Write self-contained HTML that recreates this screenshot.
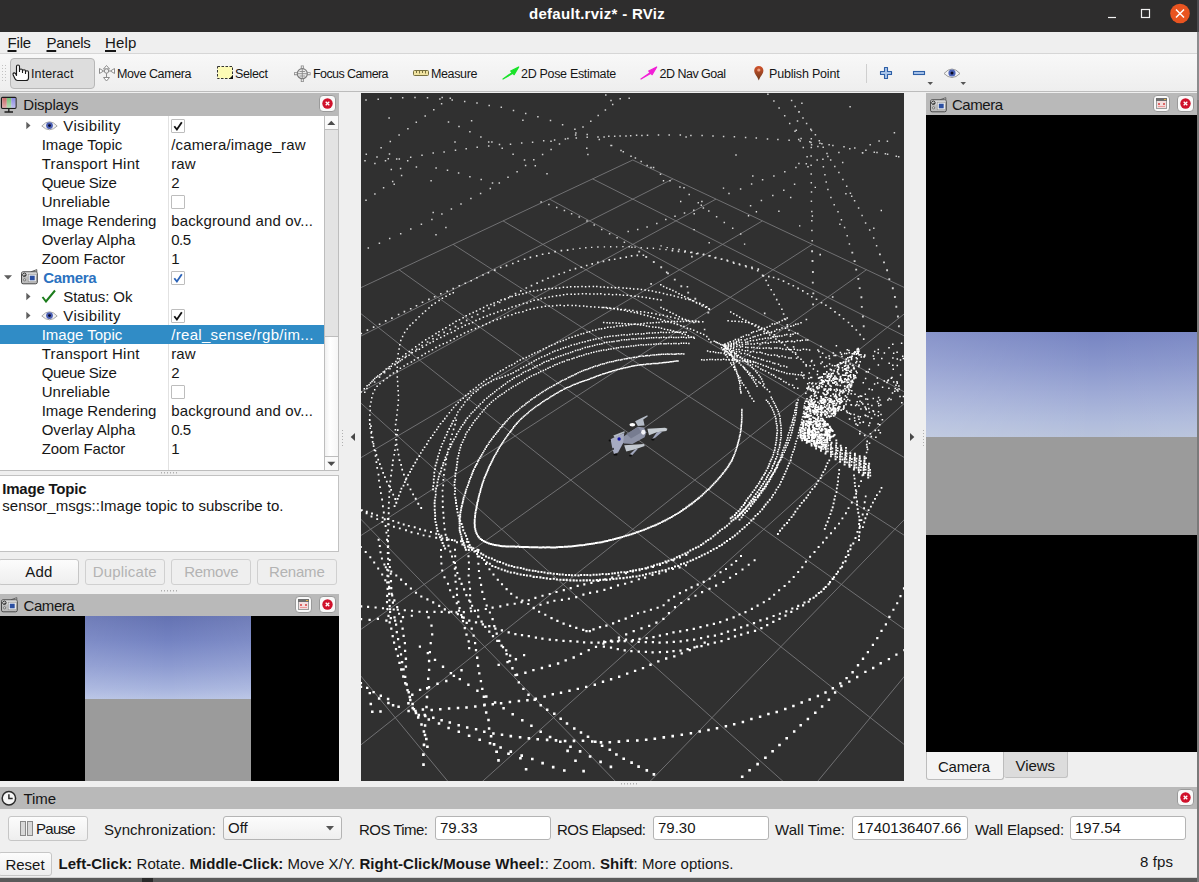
<!DOCTYPE html>
<html><head><meta charset="utf-8"><title>default.rviz* - RViz</title>
<style>
*{box-sizing:border-box;margin:0;padding:0}
html,body{width:1199px;height:882px;overflow:hidden;background:#efefef}
body{font-family:"Liberation Sans",sans-serif;font-size:15px;color:#161616;position:relative}
.a{position:absolute}
.t{position:absolute;white-space:nowrap;line-height:19px;height:19px}
#titlebar{left:0;top:0;width:1197px;height:32px;background:#2e2d2d}
#menubar{left:0;top:32px;width:1197px;height:22px;background:#efefef;border-bottom:1px solid #d6d6d6}
#toolbar{left:0;top:54px;width:1197px;height:38px;background:linear-gradient(#f8f8f8,#eeeeee);border-bottom:1px solid #bcbcbc}
.tb{position:absolute;top:65px;height:18px;line-height:18px;white-space:nowrap;color:#161616}
.dt{position:absolute;background:#b9b9b9;height:23px}
.dbtn{position:absolute;width:17px;height:17px;border:1px solid #9a9a9a;border-radius:4px;background:#f9f9f9}
.cb{position:absolute;left:171px;width:14px;height:14px;border:1px solid #bdbdbd;border-radius:1px;background:#fff}
.btn{position:absolute;height:27px;border:1px solid #c6c6c6;border-radius:3px;background:linear-gradient(#fcfcfc,#eeeeee);text-align:center;line-height:25px;font-size:15px}
.btn.dis{color:#b3b3b3;border-color:#d0d0d0;background:#efefef}
.field{position:absolute;height:24px;border:1px solid #b4b4b4;border-radius:3px;background:#fff;line-height:22px;padding-left:4px;font-size:15px;white-space:nowrap}
</style></head><body>
<div id="titlebar" class="a"></div>
<div class="t" style="left:529px;top:4px;font-weight:700;letter-spacing:0.284px;color:#fff;">default.rviz* - RViz</div>
<svg class="a" style="left:1100px;top:0" width="97" height="32" viewBox="0 0 97 32">
<path d="M8 17.5h8" stroke="#f2f2f2" stroke-width="1.2" fill="none"/>
<rect x="41.5" y="9.500" width="8" height="8" stroke="#f2f2f2" stroke-width="1.2" fill="none"/>
<circle cx="80" cy="13.500" r="9.800" fill="#e95420"/>
<path d="M76 9.500l8 8M84 9.500l-8 8" stroke="#fff" stroke-width="1.500" fill="none"/>
</svg>
<div id="menubar" class="a"></div>
<div class="t" style="left:7.5px;top:33px;letter-spacing:-0.172px;"><span style="text-decoration:underline;text-underline-offset:2px;text-decoration-thickness:1.5px">F</span>ile</div>
<div class="t" style="left:46.5px;top:33px;letter-spacing:-0.312px;"><span style="text-decoration:underline;text-underline-offset:2px;text-decoration-thickness:1.5px">P</span>anels</div>
<div class="t" style="left:105px;top:33px;letter-spacing:0.156px;"><span style="text-decoration:underline;text-underline-offset:2px;text-decoration-thickness:1.5px">H</span>elp</div>
<div id="toolbar" class="a"></div>
<svg class="a" style="left:2px;top:63px" width="6" height="22"><g fill="#c2c2c2"><rect x="0" y="2" width="1" height="1"/><rect x="3" y="2" width="1" height="1"/><rect x="0" y="5" width="1" height="1"/><rect x="3" y="5" width="1" height="1"/><rect x="0" y="8" width="1" height="1"/><rect x="3" y="8" width="1" height="1"/><rect x="0" y="11" width="1" height="1"/><rect x="3" y="11" width="1" height="1"/><rect x="0" y="14" width="1" height="1"/><rect x="3" y="14" width="1" height="1"/><rect x="0" y="17" width="1" height="1"/><rect x="3" y="17" width="1" height="1"/></g></svg>
<div class="a" style="left:10px;top:58px;width:85px;height:31px;border:1px solid #b7b7b7;border-radius:4px;background:#dddddd"></div>
<div class="tb" style="left:31px;top:65px;font-size:12.5px;letter-spacing:0.102px;">Interact</div>
<div class="tb" style="left:117px;top:65px;font-size:12.5px;letter-spacing:-0.409px;">Move Camera</div>
<div class="tb" style="left:235px;top:65px;font-size:12.5px;letter-spacing:-0.375px;">Select</div>
<div class="tb" style="left:313px;top:65px;font-size:12.5px;letter-spacing:-0.582px;">Focus Camera</div>
<div class="tb" style="left:431px;top:65px;font-size:12.5px;letter-spacing:-0.377px;">Measure</div>
<div class="tb" style="left:521px;top:65px;font-size:12.5px;letter-spacing:-0.315px;">2D Pose Estimate</div>
<div class="tb" style="left:659.5px;top:65px;font-size:12.5px;letter-spacing:-0.506px;">2D Nav Goal</div>
<div class="tb" style="left:769px;top:65px;font-size:12.5px;letter-spacing:-0.19px;">Publish Point</div>
<svg class="a" style="left:0;top:54px" width="1000" height="38" viewBox="0 54 1000 38">
<!-- hand -->
<path d="M16.500 75.500V66.500Q16.500 65 18 65Q19.500 65 19.500 66.500V71.500V70.500Q19.500 69 21 69Q22.500 69 22.500 70.500V72.500V71.200Q22.500 69.700 24 69.700Q25.500 69.700 25.500 71.200V73.500V72.200Q25.500 70.700 27 70.700Q28.500 70.700 28.500 72.200V78Q28.500 80.500 26 80.500H17.500Q15.800 80.500 15 78.800L13.200 75Q12.600 73.200 14.200 72.900Q15.600 72.700 16.500 75.500Z" fill="#fff" stroke="#1a1a1a" stroke-width="1.150" stroke-linejoin="round"/>
<!-- move camera -->
<g fill="none" stroke="#8c8c8c" stroke-width="1">
<path d="M106.500 65.500l-3 3.500h6zM106.500 81l-3-3.500h6zM99.500 68.500l4 2.500-4 2.500zM114.500 68.500l-4 2.500 4 2.500z" fill="#fff"/>
<path d="M106.500 69v8.500M103.500 71h7"/><circle cx="106.500" cy="71" r="2.200" fill="#eee"/>
</g>
<!-- select -->
<rect x="217.500" y="66.500" width="15" height="12" fill="#fdfbb5" stroke="#333" stroke-width="1" stroke-dasharray="2.500 1.500"/>
<path d="M233 75v4h-4z" fill="#111"/>
<!-- focus -->
<g fill="none">
<path d="M302.300 65.500v16.500M294 73.700h16.600" stroke="#8a8a8a" stroke-width="3"/>
<path d="M302.300 66.300v15M294.800 73.700h15" stroke="#f4f4f4" stroke-width="1.200"/>
<circle cx="302.300" cy="73.700" r="5" stroke="#7d7d7d" stroke-width="1.200" fill="#ececec"/>
<path d="M302.300 69v9.400M297.600 73.700h9.400M299.500 71.500h5.600M299.500 76h5.600" stroke="#8a8a8a" stroke-width=".9"/>
</g>
<!-- measure -->
<rect x="413.500" y="70.500" width="15" height="5" rx="1" fill="#f0e3a1" stroke="#77703f" stroke-width="1"/>
<path d="M416.500 71v2M419.500 71v2.500M422.500 71v2M425.500 71v2.500" stroke="#77703f" stroke-width="1"/>
<!-- pose arrow -->
<path d="M503 79l9-6.300-1.300-1.700 8-4-4.600 7.700-1.200-1.400z" fill="#19e32a" stroke="#19e32a" stroke-width="1.200" stroke-linejoin="round"/>
<!-- nav arrow -->
<path d="M641 79l9-6.300-1.300-1.700 8-4-4.600 7.700-1.200-1.400z" fill="#f21fd6" stroke="#f21fd6" stroke-width="1.200" stroke-linejoin="round"/>
<!-- pin -->
<defs><linearGradient id="pg" x1="0" y1="0" x2="0" y2="1"><stop offset="0" stop-color="#d4532c"/><stop offset="1" stop-color="#6b3a1c"/></linearGradient></defs>
<path d="M758.800 80.500c-1.500-4.500-4.600-6.500-4.600-10a4.600 4.600 0 0 1 9.200 0c0 3.500-3.100 5.500-4.600 10z" fill="url(#pg)"/>
<circle cx="758.800" cy="70" r="1.600" fill="#f0a080"/>
<!-- sep -->
<path d="M866.500 64v19" stroke="#cfcfcf" stroke-width="1"/>
<!-- plus -->
<path d="M884.500 67.500h3v4h4v3h-4v4h-3v-4h-4v-3h4z" fill="#a9c5ea" stroke="#2d5fa6" stroke-width="1.100" stroke-linejoin="round"/>
<!-- minus -->
<rect x="913.500" y="71.500" width="11" height="3" fill="#a9c5ea" stroke="#2d5fa6" stroke-width="1.100"/>
<path d="M927.500 82h5.500l-2.750 3z" fill="#555"/>
<!-- eye -->
<path d="M944 73.500q8-9 16 0q-8 8-16 0z" fill="#f4f4f4" stroke="#9a9a9a" stroke-width="1"/>
<circle cx="952" cy="73" r="3.600" fill="#4c63b8"/><circle cx="952" cy="73" r="1.500" fill="#0a0a20"/>
<path d="M960.500 82h5.500l-2.750 3z" fill="#555"/>
</svg>
<div class="dt" style="left:0;top:93px;width:339px"></div>
<svg class="a" style="left:0;top:94px" width="20" height="20" viewBox="0 0 20 20">
<defs><linearGradient id="dg" x1="0" y1="0" x2="0" y2="1"><stop offset="0" stop-color="#fff" stop-opacity="0"/><stop offset="1" stop-color="#fff" stop-opacity=".45"/></linearGradient></defs>
<rect x="1.500" y="3.300" width="14.500" height="11" rx="1" fill="#ddd" stroke="#1c1c1c" stroke-width="1.200"/>
<rect x="2.300" y="4" width="4.500" height="9.600" fill="#c96a6a"/><rect x="6.800" y="4" width="4.500" height="9.600" fill="#78c078"/><rect x="11.300" y="4" width="4" height="9.600" fill="#8a8ae2"/>
<rect x="2.300" y="4" width="13" height="9.600" fill="url(#dg)"/>
<path d="M8.800 15v2.500M4.500 18h8.500" stroke="#1c1c1c" stroke-width="1.300"/></svg>
<div class="t" style="left:23.3px;top:95px;letter-spacing:-0.211px;">Displays</div>
<div class="dbtn" style="left:319px;top:95px"></div><svg class="a" style="left:319px;top:95px" width="17" height="17"><circle cx="8.500" cy="8.500" r="5.200" fill="#d0112b"/><path d="M6.700 6.700l3.600 3.600M10.300 6.700l-3.600 3.600" stroke="#fff" stroke-width="1.300"/></svg>
<div class="a" style="left:0;top:116px;width:339px;height:355px;background:#fff;border-bottom:1px solid #bdbdbd;border-right:1px solid #bdbdbd"></div>
<div class="a" style="left:168px;top:116px;width:1px;height:354px;background:#e2e2e2"></div>
<div class="a" style="left:0;top:325px;width:324px;height:19px;background:#308cc6"></div>
<svg class="a" style="left:26px;top:121px" width="6" height="9"><path d="M.3 .8l4.200 3.700-4.200 3.700z" fill="#5e5e5e"/></svg>
<svg class="a" style="left:41px;top:120px" width="17" height="12" viewBox="0 0 17 12"><path d="M.8 6q7.700-8.500 15.400 0q-7.700 7.500-15.400 0z" fill="#f2f2f2" stroke="#a8a8a8" stroke-width="1"/><circle cx="8.500" cy="5.600" r="3.400" fill="#4a5fb5"/><circle cx="8.500" cy="5.600" r="1.400" fill="#080820"/></svg>
<div class="t" style="left:63.3px;top:116px;letter-spacing:0.369px;">Visibility</div>
<div class="cb" style="top:119px"></div><svg class="a" style="left:171px;top:119px" width="14" height="14"><path d="M3.300 7.200l2.600 3.300 4.900-7.300" fill="none" stroke="#111" stroke-width="1.800"/></svg>
<div class="t" style="left:41.7px;top:135px;letter-spacing:-0.001px;">Image Topic</div>
<div class="t" style="left:171.2px;top:135px;letter-spacing:0.164px;">/camera/image_raw</div>
<div class="t" style="left:41.7px;top:154px;letter-spacing:0.251px;">Transport Hint</div>
<div class="t" style="left:171.2px;top:154px;letter-spacing:0.109px;">raw</div>
<div class="t" style="left:41.7px;top:173px;letter-spacing:-0.359px;">Queue Size</div>
<div class="t" style="left:171.2px;top:173px;">2</div>
<div class="t" style="left:41.7px;top:192px;letter-spacing:0.095px;">Unreliable</div>
<div class="cb" style="top:195px"></div>
<div class="t" style="left:41.7px;top:211px;letter-spacing:-0.032px;">Image Rendering</div>
<div class="t" style="left:171.2px;top:211px;letter-spacing:0.151px;">background and ov...</div>
<div class="t" style="left:41.7px;top:230px;letter-spacing:0.016px;">Overlay Alpha</div>
<div class="t" style="left:171.2px;top:230px;letter-spacing:-0.42px;">0.5</div>
<div class="t" style="left:41.7px;top:249px;letter-spacing:-0.139px;">Zoom Factor</div>
<div class="t" style="left:171.2px;top:249px;">1</div>
<svg class="a" style="left:4px;top:275px" width="9" height="6"><path d="M0 .3h8l-4 4.200z" fill="#5e5e5e"/></svg>
<svg class="a" style="left:20px;top:269px" width="19" height="17" viewBox="0 0 19 17"><path d="M11 2.800l5.800-2.200v2.600" fill="#d0d0d0" stroke="#666" stroke-width="1"/><rect x="1.500" y="2.800" width="15.800" height="12" rx="1.600" fill="#bdbdbd" stroke="#484848" stroke-width="1"/><rect x="2.200" y="3.500" width="14.400" height="4" fill="#dcdcdc"/><rect x="8.200" y="5.200" width="8" height="7.600" fill="#f2f2f2" stroke="#8a8a8a" stroke-width=".6"/><rect x="9.800" y="6.700" width="4.900" height="4.600" fill="#2b4fa2"/><circle cx="4.400" cy="5.800" r="1.700" fill="#fff" stroke="#1e1e1e" stroke-width="1"/><circle cx="4.900" cy="6.200" r=".7" fill="#111"/><circle cx="4.600" cy="10.800" r="1.100" fill="#e8e8e8" stroke="#555" stroke-width=".7"/></svg>
<div class="t" style="left:43.2px;top:268px;font-weight:700;letter-spacing:-0.308px;color:#2b72c0;">Camera</div>
<div class="cb" style="top:271px"></div><svg class="a" style="left:171px;top:271px" width="14" height="14"><path d="M3.300 7.200l2.600 3.300 4.900-7.300" fill="none" stroke="#2a62b8" stroke-width="1.800"/></svg>
<svg class="a" style="left:26px;top:292px" width="6" height="9"><path d="M.3 .8l4.200 3.700-4.200 3.700z" fill="#5e5e5e"/></svg>
<svg class="a" style="left:41px;top:289px" width="16" height="14"><path d="M1.500 8l3.500 4.500 9-11" fill="none" stroke="#1c7c1c" stroke-width="2"/></svg>
<div class="t" style="left:63.3px;top:287px;letter-spacing:-0.103px;">Status: Ok</div>
<svg class="a" style="left:26px;top:311px" width="6" height="9"><path d="M.3 .8l4.200 3.700-4.200 3.700z" fill="#5e5e5e"/></svg>
<svg class="a" style="left:41px;top:310px" width="17" height="12" viewBox="0 0 17 12"><path d="M.8 6q7.700-8.500 15.400 0q-7.700 7.500-15.400 0z" fill="#f2f2f2" stroke="#a8a8a8" stroke-width="1"/><circle cx="8.500" cy="5.600" r="3.400" fill="#4a5fb5"/><circle cx="8.500" cy="5.600" r="1.400" fill="#080820"/></svg>
<div class="t" style="left:63.3px;top:306px;letter-spacing:0.369px;">Visibility</div>
<div class="cb" style="top:309px"></div><svg class="a" style="left:171px;top:309px" width="14" height="14"><path d="M3.300 7.200l2.600 3.300 4.900-7.300" fill="none" stroke="#111" stroke-width="1.800"/></svg>
<div class="t" style="left:41.7px;top:325px;letter-spacing:-0.001px;color:#fff;">Image Topic</div>
<div class="t" style="left:171.2px;top:325px;letter-spacing:0.314px;color:#fff;">/real_sense/rgb/im...</div>
<div class="t" style="left:41.7px;top:344px;letter-spacing:0.251px;">Transport Hint</div>
<div class="t" style="left:171.2px;top:344px;letter-spacing:0.109px;">raw</div>
<div class="t" style="left:41.7px;top:363px;letter-spacing:-0.359px;">Queue Size</div>
<div class="t" style="left:171.2px;top:363px;">2</div>
<div class="t" style="left:41.7px;top:382px;letter-spacing:0.095px;">Unreliable</div>
<div class="cb" style="top:385px"></div>
<div class="t" style="left:41.7px;top:401px;letter-spacing:-0.032px;">Image Rendering</div>
<div class="t" style="left:171.2px;top:401px;letter-spacing:0.151px;">background and ov...</div>
<div class="t" style="left:41.7px;top:420px;letter-spacing:0.016px;">Overlay Alpha</div>
<div class="t" style="left:171.2px;top:420px;letter-spacing:-0.42px;">0.5</div>
<div class="t" style="left:41.7px;top:439px;letter-spacing:-0.139px;">Zoom Factor</div>
<div class="t" style="left:171.2px;top:439px;">1</div>
<div class="a" style="left:324px;top:116px;width:15px;height:355px;background:linear-gradient(90deg,#f0f0f0,#ffffff 40%,#f6f6f6);border-left:1px solid #bdbdbd;border-right:1px solid #bdbdbd"></div>
<div class="a" style="left:324px;top:116px;width:15px;height:14px;background:#fafafa;border:1px solid #bdbdbd;border-top:none"></div>
<svg class="a" style="left:327px;top:120px" width="9" height="6"><path d="M.3 5h8l-4-4.200z" fill="#4c4c4c"/></svg>
<div class="a" style="left:324px;top:129px;width:15px;height:208px;background:#e3e3e3;border:1px solid #bdbdbd"></div>
<div class="a" style="left:324px;top:456px;width:15px;height:15px;background:#fafafa;border:1px solid #bdbdbd"></div>
<svg class="a" style="left:327px;top:461px" width="9" height="6"><path d="M.3 .8h8l-4 4.200z" fill="#4c4c4c"/></svg>
<div class="a" style="left:0;top:475px;width:339px;height:77px;background:#fff;border:1px solid #c2c2c2;border-left:none"></div>
<div class="t" style="left:2.3px;top:479px;font-weight:700;letter-spacing:-0.219px;">Image Topic</div>
<div class="t" style="left:2.3px;top:496px;letter-spacing:0.006px;">sensor_msgs::Image topic to subscribe to.</div>
<svg class="a" style="left:161px;top:472px" width="18" height="2"><rect x="0" y="0" width="1" height="1.500" fill="#b0b0b0"/><rect x="3" y="0" width="1" height="1.500" fill="#b0b0b0"/><rect x="6" y="0" width="1" height="1.500" fill="#b0b0b0"/><rect x="9" y="0" width="1" height="1.500" fill="#b0b0b0"/><rect x="12" y="0" width="1" height="1.500" fill="#b0b0b0"/><rect x="15" y="0" width="1" height="1.500" fill="#b0b0b0"/></svg>
<svg class="a" style="left:161px;top:590px" width="18" height="2"><rect x="0" y="0" width="1" height="1.500" fill="#b0b0b0"/><rect x="3" y="0" width="1" height="1.500" fill="#b0b0b0"/><rect x="6" y="0" width="1" height="1.500" fill="#b0b0b0"/><rect x="9" y="0" width="1" height="1.500" fill="#b0b0b0"/><rect x="12" y="0" width="1" height="1.500" fill="#b0b0b0"/><rect x="15" y="0" width="1" height="1.500" fill="#b0b0b0"/></svg>
<div class="btn" style="left:-2px;top:559px;width:81px;height:26px"></div>
<div class="btn dis" style="left:85px;top:559px;width:80px;height:26px"></div>
<div class="btn dis" style="left:171px;top:559px;width:80px;height:26px"></div>
<div class="btn dis" style="left:257px;top:559px;width:80px;height:26px"></div>
<div class="t" style="left:25.3px;top:562px;letter-spacing:0.132px;">Add</div>
<div class="t" style="left:92.7px;top:562px;letter-spacing:0.173px;color:#b3b3b3;">Duplicate</div>
<div class="t" style="left:184.2px;top:562px;letter-spacing:-0.293px;color:#b3b3b3;">Remove</div>
<div class="t" style="left:269px;top:562px;letter-spacing:-0.184px;color:#b3b3b3;">Rename</div>
<div class="dt" style="left:0;top:594px;width:339px;height:22px"></div>
<svg class="a" style="left:0px;top:597px" width="19" height="17" viewBox="0 0 19 17"><path d="M11 2.800l5.800-2.200v2.600" fill="#d0d0d0" stroke="#666" stroke-width="1"/><rect x="1.500" y="2.800" width="15.800" height="12" rx="1.600" fill="#bdbdbd" stroke="#484848" stroke-width="1"/><rect x="2.200" y="3.500" width="14.400" height="4" fill="#dcdcdc"/><rect x="8.200" y="5.200" width="8" height="7.600" fill="#f2f2f2" stroke="#8a8a8a" stroke-width=".6"/><rect x="9.800" y="6.700" width="4.900" height="4.600" fill="#2b4fa2"/><circle cx="4.400" cy="5.800" r="1.700" fill="#fff" stroke="#1e1e1e" stroke-width="1"/><circle cx="4.900" cy="6.200" r=".7" fill="#111"/><circle cx="4.600" cy="10.800" r="1.100" fill="#e8e8e8" stroke="#555" stroke-width=".7"/></svg>
<div class="t" style="left:23.6px;top:596px;letter-spacing:-0.46px;">Camera</div>
<div class="dbtn" style="left:295px;top:596px"></div><svg class="a" style="left:295px;top:596px" width="17" height="17"><rect x="3.500" y="3.500" width="10" height="10" fill="#f3dede" stroke="#9c9c9c"/><rect x="3" y="3" width="11" height="3" fill="#6d6d6d"/><rect x="11" y="4" width="2" height="1" fill="#e0b040"/><rect x="5" y="8" width="2" height="2" fill="#d66"/><rect x="10" y="8" width="2" height="2" fill="#d66"/><rect x="5" y="11" width="7" height="1" fill="#e99"/></svg>
<div class="dbtn" style="left:319px;top:596px"></div><svg class="a" style="left:319px;top:596px" width="17" height="17"><circle cx="8.500" cy="8.500" r="5.200" fill="#d0112b"/><path d="M6.700 6.700l3.600 3.600M10.300 6.700l-3.600 3.600" stroke="#fff" stroke-width="1.300"/></svg>
<div class="a" style="left:0;top:616px;width:339px;height:165px;background:#000"></div>
<div class="a" style="left:85px;top:616px;width:166px;height:83px;background:linear-gradient(90deg,rgba(255,255,255,.08),rgba(255,255,255,0) 50%,rgba(255,255,255,.08)),linear-gradient(#6472b2,#7483c2 30%,#8c9ad0 60%,#a7b4de 88%,#b6c2e4)"></div>
<div class="a" style="left:85px;top:699px;width:166px;height:82px;background:#9b9b9b"></div>
<div class="a" style="left:361px;top:93px;width:543px;height:688px;background:#303030;overflow:hidden"><svg width="543" height="688" viewBox="361 93 543 688" style="position:absolute;left:0;top:0;display:block"><path d="M632.8 160.0L1220.6 436.0M632.8 160.0L44.9 436.0M592.6 178.9L1190.6 480.1M672.9 178.9L74.9 480.1M549.5 199.1L1157.1 529.3M716.0 199.1L108.4 529.3M503.1 220.9L1119.5 584.4M762.4 220.9L146.0 584.4M453.1 244.3L1077.0 646.7M812.4 244.3L188.5 646.7M399.0 269.7L1028.7 717.7M866.5 269.7L236.8 717.7M340.3 297.3L973.1 799.2M925.2 297.3L292.4 799.2M276.3 327.3L908.6 893.9M989.2 327.3L356.9 893.9M206.4 360.2L832.8 1005.1M1059.1 360.2L432.8 1005.1M129.6 396.2L742.4 1137.8M1135.9 396.2L523.1 1137.8M44.9 436.0L632.8 1298.6M1220.6 436.0L632.8 1298.6" stroke="#7c7c7e" stroke-width="0.85" fill="none"/><path d="M573.2 249.1h0M579.9 248.4h0M585.8 247.8h0M591.7 247.4h0M597.9 247.0h0M604.4 246.9h0M610.7 246.8h0M616.6 246.9h0M622.9 246.6h0M629.2 246.8h0M635.1 247.1h0M641.2 247.8h0M647.4 248.3h0M653.4 248.3h0M659.9 249.1h0M666.0 249.6h0M661.1 245.9h0M667.2 247.6h0M672.9 248.7h0M679.1 249.5h0M778.9 211.2h0M881.3 210.5h0M701.9 201.5h0M694.2 213.8h0M748.5 215.7h0M812.4 216.0h0M709.2 242.8h0M684.0 187.7h0M663.5 180.7h0M815.3 187.4h0M799.7 225.9h0M744.6 244.1h0M723.5 188.1h0M680.7 201.5h0M694.1 229.6h0M756.4 211.8h0" stroke="#e5e5e5" stroke-width="1.38" stroke-linecap="square" fill="none"/><path d="M366.3 154.3h0M377.0 157.0h0M388.3 158.8h0M399.3 159.1h0M410.7 157.2h0M422.0 155.2h0M433.2 153.1h0M444.1 152.1h0M455.5 150.3h0M466.2 148.8h0M477.2 147.2h0M488.7 145.9h0M499.5 144.5h0M510.5 144.2h0M521.7 143.0h0M532.6 142.2h0M543.7 140.7h0M554.6 139.9h0M565.4 138.9h0M576.3 138.1h0M587.2 137.2h0M598.0 137.0h0M608.8 136.3h0M620.1 136.0h0M630.7 135.7h0M641.9 135.4h0M604.1 137.0h0M614.7 136.3h0M626.0 136.0h0M636.6 135.3h0M647.5 135.2h0M658.5 135.0h0M669.2 135.1h0M680.3 135.0h0M690.9 135.4h0M702.1 135.4h0M713.0 136.1h0M723.6 136.5h0M734.4 136.7h0M745.6 137.4h0M756.3 138.1h0M767.5 138.9h0M777.9 139.5h0M789.1 140.2h0M800.2 141.1h0M811.0 142.6h0M821.9 143.8h0M832.9 145.5h0M844.0 146.8h0M854.8 147.9h0M865.9 150.2h0M877.0 152.5h0M887.6 154.2h0M898.7 156.7h0M368.3 247.9h0M379.4 243.3h0M389.7 238.6h0M400.7 233.7h0M410.8 229.1h0M421.4 224.2h0M431.9 219.4h0M441.9 213.9h0M451.4 208.9h0M461.0 204.0h0M470.9 198.5h0M480.6 193.5h0M490.3 188.5h0M499.3 183.1h0M508.0 177.3h0M517.1 171.7h0M525.6 165.5h0M533.8 159.8h0M542.6 154.6h0M551.1 149.4h0M559.5 144.0h0M567.9 138.5h0M575.9 133.1h0M583.0 127.1h0M590.8 121.3h0M598.2 115.5h0M605.4 110.1h0M612.7 104.4h0M620.2 98.7h0M366.0 200.3h0M374.9 194.1h0M383.6 187.8h0M392.7 181.5h0M401.6 175.5h0M381.1 147.8h0M390.3 141.5h0M399.1 135.0h0M407.9 128.8h0M416.3 122.2h0M425.2 115.9h0M433.8 109.8h0M441.6 103.7h0M450.3 98.3h0M366.0 100.1h0M378.2 99.3h0M390.8 97.9h0M402.7 97.7h0M415.0 97.6h0M427.5 97.8h0M439.9 99.0h0M452.2 100.1h0M464.7 101.5h0M477.0 103.0h0M489.2 105.5h0M501.3 107.3h0M513.5 110.4h0M525.7 113.4h0M537.9 116.8h0M550.5 120.6h0M562.6 124.8h0M574.9 129.2h0M587.2 134.4h0M599.3 139.6h0M611.0 145.4h0M623.3 151.7h0M635.4 158.0h0M647.2 165.5h0M611.6 145.6h0M621.0 150.5h0M631.0 156.3h0M641.2 161.5h0M651.0 167.4h0M660.5 174.2h0M670.0 180.7h0M679.9 187.1h0M689.2 194.6h0M698.3 202.8h0M811.5 130.4h0M811.3 138.7h0M811.3 147.4h0M811.1 156.1h0M811.1 165.2h0M811.2 174.1h0M811.3 182.7h0M811.5 192.0h0M811.4 201.3h0M811.8 211.4h0M811.8 220.7h0M811.9 230.6h0M812.2 240.7h0M767.9 94.3h0M773.9 101.1h0M779.1 107.9h0M784.7 115.7h0M789.7 123.4h0M795.0 131.3h0M801.1 138.4h0M809.8 141.7h0M819.9 143.3h0M829.1 144.7h0M791.6 100.5h0M795.2 106.4h0M798.9 112.0h0M803.0 117.9h0M806.6 123.5h0M810.8 129.3h0M815.4 134.8h0M819.3 140.8h0M823.2 147.3h0M827.0 153.4h0M830.7 160.1h0M834.8 166.4h0M838.9 172.6h0M842.9 179.6h0M846.7 186.2h0M850.4 193.3h0M854.6 200.7h0M858.6 208.0h0M862.1 215.4h0M865.6 222.9h0M869.7 230.0h0M873.7 238.1h0M876.6 245.8h0M822.9 159.2h0M823.4 166.7h0M824.9 174.8h0M826.2 182.0h0M827.9 189.6h0M830.9 197.4h0M834.2 204.7h0M838.0 211.8h0M841.4 219.8h0M844.6 227.5h0M847.2 235.8h0M849.4 243.9h0M729.0 193.4h0M740.6 188.9h0M751.6 184.1h0M762.6 179.7h0M773.9 175.9h0M784.8 171.7h0M795.9 167.6h0M806.3 163.7h0M817.2 159.9h0M827.9 156.4h0M838.9 152.5h0M849.8 148.8h0M750.6 205.7h0M761.4 200.6h0M772.8 195.6h0M783.8 190.2h0M794.6 184.2h0M894.4 132.8h0M887.4 141.3h0M879.1 140.9h0M870.2 144.7h0M862.5 152.8h0M862.7 153.0h0M874.3 152.3h0M885.4 153.7h0M896.3 156.2h0M801.9 103.3h0M799.1 111.7h0M797.5 120.9h0M796.3 130.3h0M798.7 139.5h0M803.3 147.6h0M807.1 156.8h0M808.0 166.7h0M541.1 201.9h0M548.9 204.6h0M556.7 207.4h0M564.4 210.5h0M571.6 213.7h0M579.2 217.1h0M587.0 220.9h0M594.2 225.0h0M601.7 229.5h0M609.6 233.7h0M617.1 237.7h0M624.4 242.2h0M631.9 247.2h0M628.2 231.6h0M637.7 229.5h0M647.1 227.0h0M656.8 223.6h0M665.8 219.4h0M675.0 216.2h0M684.5 213.0h0M693.8 210.2h0M703.4 207.9h0M701.3 205.2h0M708.8 210.9h0M716.6 216.8h0M724.3 222.4h0M732.7 228.3h0M740.7 234.1h0M436.1 167.9h0M447.5 170.3h0M458.6 173.1h0M469.9 176.8h0M481.2 179.6h0M492.5 182.9h0M448.5 121.9h0M459.0 126.6h0M469.9 131.8h0M480.9 137.0h0M491.9 142.0h0M502.2 148.3h0M513.1 154.3h0M524.5 159.9h0M535.3 165.8h0M365.0 160.8h0M374.9 163.4h0M385.5 160.8h0M396.7 159.0h0M407.7 160.8h0M416.4 166.9h0M686.1 137.1h0M488.7 142.1h0M445.9 227.6h0M575.6 134.9h0M845.9 193.7h0M752.8 176.0h0M551.0 141.2h0M839.9 224.3h0M842.7 162.5h0M471.6 120.8h0M455.0 141.9h0M587.9 154.4h0M611.0 100.5h0M547.0 173.8h0M391.3 169.6h0M851.7 196.3h0M873.8 228.3h0M629.2 98.3h0M394.2 184.3h0M817.9 146.4h0M433.2 212.6h0M653.6 167.5h0M431.1 180.8h0M850.1 106.8h0M811.6 144.8h0M586.8 148.3h0M798.9 163.4h0M400.6 168.5h0M442.2 97.5h0M389.5 154.0h0M605.8 95.1h0M436.0 234.8h0M736.0 155.0h0M389.1 117.9h0M790.7 197.6h0M522.9 120.3h0" stroke="#d1d1d1" stroke-width="1.50" stroke-linecap="square" fill="none"/><path d="M678.0 360.9h0M676.5 361.1h0M674.9 361.3h0M673.3 361.6h0M671.7 361.7h0M670.2 361.8h0M668.7 362.2h0M667.1 362.2h0M665.6 362.6h0M664.1 362.6h0M662.6 362.7h0M661.0 362.9h0M659.3 363.0h0M657.8 363.4h0M656.2 363.4h0M654.8 363.5h0M653.2 363.6h0M651.5 363.7h0M650.1 363.9h0M648.4 364.1h0M646.9 364.1h0M645.4 364.4h0M643.7 364.5h0M642.3 364.7h0M640.8 364.8h0M639.3 364.9h0M637.6 365.3h0M636.0 365.5h0M634.4 365.8h0M633.0 366.1h0M631.5 366.3h0M629.9 366.7h0M628.4 367.0h0M626.9 367.5h0M625.3 367.8h0M623.7 368.1h0M622.3 368.6h0M620.8 368.8h0M619.2 369.3h0M617.5 369.6h0M616.1 370.0h0M614.5 370.5h0M613.0 370.8h0M611.5 371.4h0M610.0 371.8h0M608.6 372.3h0M607.1 372.8h0M605.5 373.2h0M604.0 373.8h0M602.6 374.1h0M600.9 374.7h0M599.5 375.2h0M598.1 375.7h0M596.4 376.3h0M595.0 376.9h0M593.7 377.5h0M592.1 378.1h0M590.6 378.5h0M589.2 379.2h0M587.7 379.8h0M586.1 380.2h0M584.5 380.8h0M583.0 381.2h0M581.5 381.8h0M580.0 382.3h0M578.4 382.9h0M577.0 383.5h0M575.4 384.2h0M574.1 384.6h0M572.5 385.3h0M571.1 385.9h0M569.7 386.7h0M568.1 387.2h0M566.6 387.8h0M565.2 388.6h0M563.9 389.3h0M562.2 390.2h0M560.9 390.8h0M559.5 391.5h0M558.1 392.6h0M556.7 393.3h0M555.2 394.0h0M553.8 395.0h0M552.5 395.8h0M551.0 396.5h0M549.7 397.6h0M548.4 398.4h0M547.0 399.2h0M545.5 400.1h0M544.1 400.9h0M542.7 401.8h0M541.4 402.8h0M540.2 403.7h0M538.8 404.8h0M537.5 405.6h0M535.9 406.5h0M534.6 407.5h0M533.4 408.6h0M532.1 409.5h0M530.7 410.6h0M529.3 411.6h0M528.2 412.7h0M526.9 413.7h0M525.5 414.9h0M524.3 416.0h0M523.2 417.0h0M741.9 417.7h0M741.9 416.0h0M741.8 414.5h0M741.8 412.8h0M741.9 411.0h0M741.9 409.4h0M683.8 354.0h0M681.8 353.8h0M680.0 354.1h0M678.2 353.7h0M676.3 353.9h0M674.8 354.2h0M672.9 354.2h0M671.2 354.0h0M669.1 354.3h0M667.5 354.0h0M665.7 354.2h0M663.7 354.3h0M661.8 354.3h0M660.1 354.5h0M658.5 354.6h0M656.7 354.8h0M654.7 355.1h0M653.0 355.1h0M650.9 355.3h0M649.2 355.7h0M647.3 355.6h0M645.8 355.7h0M643.8 356.2h0M642.1 356.1h0M640.0 356.3h0M638.6 356.6h0M636.7 357.2h0M634.7 357.2h0M633.2 357.6h0M631.1 357.9h0M629.3 358.0h0M627.4 358.5h0M626.0 358.8h0M624.2 358.9h0M622.1 359.4h0M620.6 359.9h0M618.6 360.0h0M616.8 360.5h0M615.2 360.8h0M613.4 361.4h0M611.6 361.8h0M609.7 362.1h0M607.8 362.6h0M606.2 362.9h0M604.2 363.7h0M602.5 363.9h0M600.6 364.6h0M599.0 365.3h0M597.4 365.9h0M595.4 366.1h0M593.6 366.8h0M592.1 367.4h0M590.2 368.0h0M588.6 368.7h0M586.9 369.4h0M585.2 369.8h0M583.5 370.6h0M581.7 371.3h0M580.0 372.0h0M578.1 372.8h0M576.4 373.8h0M574.9 374.4h0M573.1 375.4h0M571.5 375.9h0M569.9 376.9h0M568.3 377.5h0M566.4 378.7h0M564.9 379.6h0M562.9 380.2h0M561.3 381.0h0M560.0 382.1h0M558.3 382.9h0M556.6 383.8h0M554.7 384.9h0M553.4 385.5h0M551.6 386.7h0M549.8 387.5h0M548.1 388.4h0M546.5 389.6h0M545.1 390.4h0M543.2 391.5h0M541.8 392.4h0M540.1 393.5h0M538.7 394.7h0M536.8 395.6h0M535.4 396.9h0M533.9 397.8h0M532.1 399.1h0M530.7 400.1h0M529.1 401.5h0M527.5 402.5h0M526.0 403.6h0M524.7 405.0h0M522.9 405.9h0M521.6 407.1h0M519.8 408.6h0M518.4 409.9h0M516.9 411.2h0M515.5 412.2h0M513.8 413.6h0M512.7 415.1h0M511.0 416.3h0M509.7 417.7h0M693.6 337.2h0M691.0 337.3h0M688.9 337.5h0M686.3 337.7h0M683.6 337.3h0M681.4 337.2h0M678.5 337.4h0M676.1 337.4h0M673.7 337.5h0M671.4 337.3h0M669.0 337.4h0M666.2 337.7h0M663.8 337.3h0M661.2 337.6h0M659.2 337.8h0M656.4 337.5h0M653.7 337.8h0M651.5 337.7h0M649.1 337.9h0M646.8 338.2h0M643.9 338.4h0M641.3 338.4h0M639.0 338.4h0M636.4 338.9h0M633.8 339.0h0M631.9 339.0h0M629.0 339.5h0M626.7 339.8h0M624.4 339.8h0M621.6 340.1h0M619.0 340.8h0M617.0 341.0h0M614.0 341.5h0M612.0 341.7h0M609.5 342.1h0M606.8 342.3h0M604.3 342.8h0M601.9 343.7h0M599.7 344.3h0M597.3 344.6h0M594.7 345.3h0M592.5 345.9h0M589.7 346.6h0M587.7 347.0h0M585.2 347.6h0M582.4 348.4h0M580.3 349.5h0M577.9 349.9h0M575.5 350.6h0M572.7 351.7h0M570.6 352.4h0M568.2 353.4h0M565.7 354.1h0M563.4 355.0h0M560.9 355.8h0M558.5 356.4h0M556.0 357.6h0M553.5 358.7h0M551.2 359.1h0M548.8 360.7h0M546.6 361.2h0M544.0 362.2h0M542.1 363.6h0M539.8 364.8h0M537.1 365.8h0M534.9 367.1h0M532.9 368.2h0M530.1 369.4h0M528.3 370.6h0M525.5 371.4h0M523.2 372.5h0M521.4 374.2h0M519.0 375.5h0M516.7 376.5h0M514.2 377.8h0M512.3 379.2h0M509.9 380.8h0M507.5 382.1h0M505.5 383.9h0M503.3 385.2h0M501.5 386.8h0M499.3 388.5h0M496.7 389.9h0M494.8 391.8h0M492.7 393.4h0M490.7 394.8h0M488.8 396.4h0M486.8 398.2h0M484.3 400.0h0M482.7 402.3h0M480.3 403.9h0M478.7 406.0h0M476.6 407.7h0M474.8 409.9h0M472.9 412.0h0M471.1 413.6h0M469.5 415.9h0M688.9 343.4h0M686.3 343.2h0M683.7 343.3h0M681.3 343.3h0M678.8 343.7h0M676.0 343.5h0M673.9 343.4h0M671.2 343.8h0M668.4 343.6h0M666.0 343.8h0M664.0 343.7h0M660.9 343.8h0M658.7 344.0h0M656.2 344.1h0M653.9 344.2h0M651.1 344.6h0M648.5 344.6h0M646.1 344.8h0M643.4 345.1h0M641.1 344.8h0M638.5 345.2h0M635.9 345.5h0M633.6 345.9h0M631.1 345.9h0M628.5 346.5h0M626.4 346.7h0M623.5 347.1h0M621.1 347.1h0M618.4 347.8h0M616.4 348.1h0M613.7 348.4h0M611.0 349.1h0M608.6 349.3h0M606.4 349.9h0M603.7 350.1h0M601.3 350.5h0M599.0 351.1h0M596.5 351.6h0M593.8 352.2h0M591.3 352.7h0M588.6 353.7h0M586.3 354.1h0M583.9 354.9h0M581.5 355.7h0M579.2 356.3h0M577.0 357.3h0M574.0 358.1h0M572.1 358.8h0M569.2 359.7h0M567.1 360.1h0M564.3 361.5h0M562.3 362.0h0M559.6 362.9h0M557.2 364.2h0M554.9 364.8h0M552.9 366.2h0M550.1 367.3h0M548.0 368.3h0M545.7 369.5h0M543.4 370.5h0M540.7 371.6h0M538.6 372.7h0M536.2 374.0h0M533.9 374.8h0M531.4 376.0h0M529.3 377.2h0M526.9 378.5h0M524.7 380.0h0M522.4 381.5h0M519.8 382.8h0M517.8 384.0h0M515.7 385.5h0M513.2 386.6h0M511.3 387.9h0M508.9 389.6h0M506.3 391.1h0M504.4 392.7h0M502.0 394.2h0M499.9 395.5h0M498.0 396.8h0M495.7 398.8h0M493.4 400.6h0M491.4 402.2h0M489.5 404.2h0M487.4 405.9h0M485.6 408.0h0M484.0 409.8h0M482.2 411.9h0M480.2 413.9h0M478.5 416.4h0M698.5 321.4h0M695.9 321.1h0M692.6 321.4h0M689.4 321.5h0M686.6 321.1h0M683.5 321.4h0M680.5 321.5h0M677.3 321.6h0M674.4 321.5h0M671.5 321.5h0M668.3 321.8h0M665.6 321.9h0M662.4 321.8h0M659.0 322.4h0M656.4 322.6h0M653.1 322.7h0M650.5 323.0h0M647.2 323.0h0M644.1 323.6h0M641.0 323.8h0M638.1 324.2h0M635.2 324.1h0M631.7 324.4h0M628.9 324.9h0M626.1 325.4h0M622.6 325.8h0M620.1 326.1h0M616.9 326.1h0M614.0 326.9h0M610.9 327.3h0M607.7 327.3h0M604.8 328.2h0M601.5 328.7h0M599.0 329.0h0M595.8 330.0h0M592.7 330.5h0M589.6 331.7h0M587.0 332.3h0M583.6 333.4h0M581.1 334.0h0M578.0 335.3h0M575.3 336.1h0M572.1 337.2h0M569.0 338.0h0M566.1 339.4h0M563.3 340.4h0M560.4 341.6h0M557.4 342.5h0M555.0 343.9h0M551.6 345.3h0M549.2 346.3h0M546.2 347.7h0M543.3 348.9h0M540.1 350.8h0M537.8 351.9h0M534.7 353.1h0M532.0 354.5h0M529.2 356.1h0M526.3 357.6h0M523.1 358.5h0M520.2 360.0h0M517.3 361.4h0M514.7 363.4h0M511.8 364.9h0M509.3 366.0h0M506.2 367.7h0M503.1 369.7h0M500.4 371.0h0M497.8 372.9h0M495.1 374.3h0M492.2 375.9h0M489.7 378.1h0M486.5 379.4h0M483.8 381.4h0M481.5 383.6h0M478.8 385.1h0M476.1 387.4h0M473.4 389.6h0M470.4 391.2h0M468.3 393.8h0M465.7 395.6h0M463.2 398.2h0M460.5 400.3h0M458.2 402.6h0M456.0 405.1h0M453.6 407.6h0M451.6 410.1h0M449.4 412.8h0M446.9 415.9h0M693.9 322.5h0M689.8 321.6h0M686.4 320.6h0M682.4 319.6h0M678.4 319.1h0M674.9 317.9h0M670.7 316.9h0M667.3 316.3h0M663.3 315.3h0M659.7 314.9h0M656.0 314.1h0M651.8 313.2h0M648.3 312.8h0M644.5 312.1h0M640.7 311.8h0M636.9 311.6h0M632.9 310.5h0M629.4 310.2h0M625.5 309.6h0M621.3 309.4h0M617.6 308.5h0M613.8 308.4h0M609.8 307.9h0M606.2 307.6h0M602.2 307.4h0M598.8 307.2h0M594.7 306.9h0M590.9 306.7h0M586.9 306.5h0M583.7 306.1h0M579.6 306.0h0M575.8 305.5h0M572.2 305.5h0M567.9 305.3h0M564.2 305.7h0M560.2 305.3h0M556.8 305.4h0M552.6 305.9h0M549.1 306.1h0M545.4 306.2h0M541.7 307.1h0M537.4 307.4h0M534.0 308.5h0M530.2 309.2h0M526.5 310.2h0M522.9 311.7h0M518.9 312.5h0M515.6 313.2h0M511.9 314.8h0M508.0 315.6h0M504.6 316.9h0M500.6 318.4h0M497.2 319.4h0M493.3 320.8h0M489.7 322.6h0M486.3 324.0h0M482.7 325.4h0M478.6 326.7h0M475.5 328.4h0M471.5 329.7h0M468.1 331.4h0M464.5 333.0h0M460.9 335.0h0M457.1 336.6h0M454.1 338.8h0M450.5 340.5h0M446.9 342.4h0M443.3 343.7h0M439.6 345.6h0M436.0 347.5h0M432.4 349.8h0M428.9 351.4h0M425.3 353.6h0M422.0 355.5h0M418.1 357.8h0M414.4 359.9h0M411.4 361.9h0M407.5 364.0h0M404.1 366.1h0M400.4 368.3h0M397.0 370.7h0M393.5 373.0h0M390.0 375.6h0M387.1 378.1h0M383.5 380.7h0M380.0 383.4h0M377.1 386.2h0M374.7 389.7h0M372.9 393.5h0M371.8 397.8h0M371.0 402.1h0M370.1 406.3h0M370.2 410.5h0M369.8 415.1h0M661.0 300.0h0M657.4 299.6h0M653.6 298.7h0M649.8 298.2h0M646.2 297.5h0M642.3 297.1h0M638.5 296.4h0M635.0 296.3h0M631.1 295.7h0M627.2 295.3h0M623.4 295.2h0M619.9 294.7h0M616.4 294.6h0M612.6 294.8h0M608.9 294.2h0M604.8 294.4h0M600.8 293.8h0M597.4 293.9h0M593.9 294.0h0M589.9 294.0h0M586.1 293.8h0M582.5 293.7h0M578.5 293.9h0M574.8 294.2h0M571.2 294.2h0M567.1 294.3h0M563.6 294.8h0M560.0 295.4h0M556.5 295.7h0M552.5 296.4h0M549.1 297.0h0M545.1 298.1h0M541.2 298.6h0M538.1 299.8h0M534.1 300.3h0M530.7 301.6h0M527.0 302.9h0M523.4 303.6h0M519.3 304.7h0M515.9 306.0h0M512.1 306.9h0M508.7 308.4h0M504.9 309.8h0M501.4 310.4h0M497.7 312.1h0M494.0 313.4h0M490.2 314.5h0M487.1 316.0h0M483.4 317.2h0M479.7 319.0h0M476.0 320.6h0M472.6 322.4h0M469.1 323.7h0M465.3 325.2h0M462.1 326.9h0M458.2 328.6h0M454.9 330.7h0M451.4 332.5h0M447.5 333.7h0M444.4 335.7h0M440.8 337.6h0M436.9 339.3h0M433.3 341.6h0M430.1 343.1h0M426.4 345.0h0M422.6 347.3h0M419.4 349.3h0M415.8 351.1h0M412.2 352.8h0M409.1 355.3h0M405.2 357.5h0M402.1 359.4h0M398.5 362.0h0M394.9 364.2h0M391.3 366.2h0M388.2 368.4h0M384.6 371.3h0M381.3 373.7h0M377.8 375.9h0M374.7 378.6h0M372.0 381.6h0M369.1 384.8h0M366.9 388.6h0M364.8 392.2h0M453.3 292.7h0M449.8 294.3h0M446.1 296.3h0M442.4 298.2h0M439.1 300.5h0M435.3 303.1h0M431.8 305.3h0M429.0 307.9h0M425.5 311.1h0M422.6 313.6h0M419.1 316.8h0M416.0 319.9h0M412.8 322.9h0M410.0 325.6h0M407.2 328.9h0M404.6 332.5h0M402.6 336.5h0M400.8 340.4h0M399.8 344.7h0M399.1 349.1h0M398.2 353.8h0M397.6 358.4h0M397.3 362.9h0M397.3 367.3h0M397.2 371.8h0M397.3 376.9h0M397.6 381.5h0M397.8 386.1h0M398.2 390.8h0M398.4 395.3h0M398.4 400.2h0M398.0 405.3h0M397.4 409.9h0M396.9 415.0h0M793.4 417.9h0M793.7 415.4h0M794.7 412.5h0M794.9 410.2h0M795.9 407.8h0M796.0 405.0h0M796.5 403.0h0M802.6 416.7h0M803.4 413.6h0M803.9 411.4h0M804.0 408.1h0M804.3 406.0h0M804.7 403.3h0M766.4 400.2h0M767.8 401.7h0M769.3 403.6h0M770.6 406.0h0M771.9 407.8h0M772.7 409.9h0M773.7 412.1h0M774.4 414.3h0M775.2 416.4h0M771.2 397.2h0M772.1 398.9h0M773.3 401.4h0M774.4 403.3h0M775.4 405.4h0M776.3 407.3h0M777.4 409.6h0M778.3 411.5h0M779.1 413.9h0M779.7 416.0h0M798.1 400.1h0M797.4 402.8h0M796.9 405.3h0M796.9 407.6h0M796.4 410.2h0M796.3 412.7h0M795.8 414.8h0M795.0 417.4h0M603.8 307.4h0M607.5 308.3h0M610.8 308.5h0M614.3 308.8h0M617.8 309.5h0M620.8 309.8h0M624.4 310.3h0M627.4 311.2h0M631.0 311.7h0M634.4 312.6h0M637.4 313.1h0M640.7 314.0h0M644.3 315.1h0M647.7 315.8h0M650.9 316.7h0M654.1 317.8h0M657.7 318.7h0M660.7 319.5h0M664.4 320.4h0M667.8 321.6h0M671.0 322.5h0M674.3 323.6h0M677.3 324.6h0M680.9 325.7h0M683.9 326.5h0M687.4 328.2h0M690.5 329.1h0M693.7 330.3h0M697.3 332.1h0M700.6 333.2h0M703.7 334.5h0M706.8 336.5h0M708.8 339.2h0M710.9 341.9h0M603.7 322.5h0M607.1 322.8h0M609.8 322.9h0M612.9 322.7h0M616.2 322.9h0M619.1 323.2h0M622.1 323.5h0M625.1 323.7h0M628.5 323.7h0M631.1 324.2h0M634.1 324.3h0M637.4 324.4h0M640.5 325.1h0M643.5 325.3h0M646.5 325.9h0M649.3 326.5h0M652.8 326.9h0M655.8 327.2h0M658.8 327.6h0M661.5 328.2h0M664.5 329.2h0M667.7 329.7h0M670.5 330.2h0M673.5 331.0h0M676.4 332.0h0M679.5 332.6h0M682.3 333.7h0M685.2 334.4h0M688.3 335.8h0M691.4 337.0h0M694.3 338.3h0M725.0 343.9h0M727.9 342.9h0M730.2 341.7h0M733.5 341.1h0M735.4 339.5h0M738.5 339.3h0M741.2 337.3h0M743.3 336.4h0M746.4 335.1h0M748.8 335.0h0M751.6 332.8h0M753.4 331.8h0M756.7 331.3h0M759.1 330.0h0M761.6 329.1h0M764.4 328.4h0M767.1 327.2h0M769.9 326.2h0M772.3 324.1h0M774.8 324.0h0M777.1 323.0h0M779.3 322.0h0M782.2 320.6h0M784.5 319.0h0M787.2 318.0h0M724.8 344.8h0M728.6 344.3h0M731.3 343.6h0M733.9 343.1h0M736.6 341.4h0M738.7 340.8h0M741.2 339.8h0M745.0 339.9h0M747.0 338.9h0M750.3 338.2h0M753.1 337.0h0M755.0 336.6h0M757.9 335.6h0M760.7 334.7h0M764.2 333.4h0M766.4 333.3h0M769.1 332.8h0M771.6 332.0h0M774.7 331.3h0M776.7 329.6h0M779.6 329.7h0M782.0 328.1h0M785.5 328.2h0M787.5 326.8h0M790.9 326.3h0M793.6 325.6h0M795.7 324.2h0M798.1 324.0h0M801.0 322.7h0M726.0 345.6h0M728.4 345.1h0M731.2 344.7h0M733.7 343.5h0M736.2 342.9h0M739.4 342.6h0M741.9 342.6h0M745.8 342.3h0M747.7 341.9h0M750.4 340.7h0M753.4 340.6h0M756.7 340.1h0M759.5 339.2h0M762.6 339.1h0M765.3 338.2h0M768.1 338.0h0M770.9 338.2h0M773.5 337.1h0M775.5 336.5h0M779.4 336.0h0M781.9 336.1h0M784.7 335.1h0M786.8 334.6h0M790.6 334.4h0M793.0 334.2h0M795.3 333.1h0M797.8 333.6h0M725.0 346.5h0M728.2 346.0h0M730.8 345.9h0M733.8 345.1h0M737.0 344.6h0M739.5 345.3h0M742.4 344.6h0M745.9 344.2h0M748.0 344.0h0M751.1 344.0h0M754.3 343.9h0M757.4 343.2h0M760.0 343.9h0M762.4 342.8h0M765.5 342.7h0M768.3 343.2h0M770.8 342.3h0M774.1 342.1h0M776.6 342.3h0M779.4 341.6h0M782.5 341.9h0M786.0 341.8h0M787.8 341.2h0M791.5 341.4h0M794.5 341.7h0M797.3 340.5h0M800.3 340.8h0M802.3 340.2h0M805.9 340.0h0M807.8 339.9h0M726.0 346.4h0M728.6 346.1h0M731.2 346.5h0M733.8 347.0h0M736.8 346.5h0M740.4 347.0h0M742.4 346.6h0M745.8 347.3h0M747.9 347.4h0M751.7 347.6h0M753.9 347.6h0M757.2 348.0h0M759.6 348.3h0M763.4 348.3h0M766.2 348.0h0M769.1 347.9h0M771.2 348.5h0M774.9 348.0h0M776.9 348.0h0M780.1 348.3h0M782.7 349.1h0M786.0 349.5h0M788.7 349.3h0M791.1 349.7h0M794.3 349.3h0M797.5 350.0h0M800.3 350.2h0M803.4 349.3h0M806.5 349.4h0M809.6 349.9h0M725.1 347.6h0M728.0 347.4h0M730.9 348.2h0M733.4 348.4h0M736.4 349.4h0M739.0 349.6h0M742.2 349.9h0M745.4 350.7h0M747.7 350.6h0M750.6 351.9h0M753.5 351.4h0M756.8 352.4h0M760.1 352.3h0M762.1 352.9h0M765.4 353.7h0M768.1 354.7h0M771.3 355.2h0M774.5 354.9h0M777.3 355.6h0M779.1 356.7h0M782.1 356.1h0M785.2 356.9h0M788.9 358.1h0M791.1 358.1h0M725.6 348.1h0M728.1 348.6h0M730.2 349.2h0M733.6 350.5h0M736.6 351.7h0M739.5 351.8h0M741.2 353.5h0M744.6 353.5h0M747.5 354.5h0M749.7 355.5h0M752.8 356.7h0M755.1 357.7h0M758.5 358.3h0M761.4 359.6h0M763.4 360.1h0M767.0 361.2h0M769.7 361.5h0M772.9 363.1h0M774.8 363.6h0M778.5 364.2h0M780.6 366.0h0M784.0 366.0h0M786.7 367.1h0M725.0 348.9h0M726.9 349.6h0M729.5 351.1h0M731.8 352.3h0M734.8 354.1h0M736.9 355.7h0M740.5 357.1h0M742.4 358.6h0M745.0 359.4h0M747.6 360.6h0M750.4 362.2h0M752.6 364.6h0M755.7 365.9h0M758.1 367.1h0M760.8 368.9h0M762.8 370.1h0M765.5 370.9h0M768.7 372.8h0M771.4 374.6h0M773.7 375.2h0M775.6 377.1h0M779.1 378.2h0M780.9 379.3h0M783.7 381.6h0M786.1 382.5h0M789.0 384.6h0M792.6 385.2h0M794.2 387.8h0M797.8 388.3h0M723.9 349.3h0M726.0 351.2h0M728.3 353.0h0M729.9 354.8h0M732.1 356.8h0M734.8 359.5h0M736.5 361.6h0M739.2 363.1h0M741.0 364.9h0M743.7 367.4h0M744.8 368.9h0M747.7 371.2h0M749.9 373.1h0M752.2 375.8h0M753.6 377.6h0M755.9 379.8h0M758.8 382.0h0M760.3 383.2h0M763.0 385.8h0M764.6 387.5h0M767.3 389.4h0M769.6 391.7h0M722.9 349.8h0M724.7 352.6h0M725.6 355.1h0M727.3 357.1h0M729.3 360.1h0M730.7 362.9h0M731.7 364.7h0M733.8 367.2h0M734.7 369.7h0M736.9 373.0h0M738.4 375.7h0M740.0 377.5h0M740.9 380.6h0M742.2 383.0h0M743.7 384.9h0M745.8 387.7h0M747.8 391.2h0M748.8 393.0h0M750.0 396.0h0M752.0 398.5h0M753.8 401.3h0M701.7 359.8h0M704.1 359.9h0M707.0 359.7h0M709.9 359.5h0M712.4 359.6h0M715.4 359.7h0M718.0 359.5h0M721.0 359.8h0M723.6 359.3h0M726.2 359.7h0M728.9 359.5h0M732.0 360.1h0M734.3 360.1h0M737.3 360.2h0M739.7 360.8h0M742.8 361.0h0M745.2 361.3h0M747.9 362.0h0M750.6 362.0h0M753.8 362.3h0M707.6 351.0h0M710.3 351.7h0M713.4 351.8h0M715.7 352.6h0M718.5 352.7h0M721.0 353.1h0M724.2 353.5h0M726.5 354.5h0M729.5 355.2h0M731.9 355.8h0M734.6 356.1h0M737.2 357.0h0M740.0 357.4h0M742.3 358.6h0M744.9 359.3h0M747.6 359.8h0M750.2 360.7h0M753.3 361.4h0M755.8 362.4h0M758.0 363.6h0M760.7 364.2h0M763.3 365.5h0M766.2 366.3h0M768.3 367.3h0M771.2 368.4h0M774.0 369.1h0M776.6 370.3h0M778.8 371.0h0M781.6 371.8h0M784.3 372.4h0M786.9 373.4h0M789.8 373.7h0M792.9 374.1h0M795.3 374.5h0M798.4 374.8h0M801.1 374.9h0M804.0 374.9h0M714.2 341.2h0M715.9 341.9h0M717.3 342.7h0M719.1 343.5h0M720.7 344.6h0M722.4 344.9h0M724.0 346.2h0M725.4 347.0h0M726.5 348.2h0M728.2 349.0h0M729.3 350.6h0M730.5 352.1h0M731.0 353.4h0M731.6 355.0h0M732.1 356.7h0M732.8 358.6h0M732.7 360.3h0M733.5 362.2h0M733.8 364.1h0M734.6 366.2h0M734.9 367.7h0M735.9 369.4h0M736.5 371.3h0M736.8 373.1h0M737.5 374.4h0M738.1 376.6h0M738.6 378.2h0M739.0 380.2h0M739.6 381.7h0M739.7 383.6h0M740.4 385.7h0M740.1 387.7h0M740.3 389.4h0M740.8 391.4h0M741.0 392.9h0M721.6 347.7h0M723.6 348.9h0M725.0 350.7h0M727.2 351.8h0M729.1 353.8h0M730.6 354.9h0M732.6 356.8h0M734.1 358.0h0M735.9 359.8h0M737.6 361.3h0M739.5 363.0h0M740.9 364.9h0M743.0 366.5h0M744.5 368.1h0M746.1 370.1h0M747.5 372.2h0M748.8 374.2h0M750.1 375.6h0M751.8 378.0h0M753.4 380.0h0M754.5 382.1h0M755.8 383.7h0M757.0 386.3h0M724.0 345.1h0M726.0 346.4h0M728.1 348.0h0M730.2 349.2h0M732.0 350.8h0M734.4 352.6h0M736.2 353.8h0M738.4 355.3h0M740.4 357.3h0M742.2 358.7h0M744.5 360.4h0M746.4 362.1h0M748.0 363.9h0M750.3 365.2h0M752.2 367.2h0M753.5 368.8h0M755.7 371.1h0M757.1 372.8h0M759.0 375.2h0M760.4 377.1h0M761.6 379.1h0M762.6 381.6h0M763.8 384.0h0M361.1 392.1h0M364.3 388.7h0M367.1 385.7h0M370.5 383.1h0M373.4 380.0h0M376.5 377.3h0M379.9 374.8h0M383.2 372.0h0M386.2 369.1h0M389.4 366.8h0M392.5 363.7h0M395.9 361.6h0M399.5 358.8h0M402.7 356.6h0M405.8 353.7h0M409.3 351.4h0M412.2 349.4h0M415.7 346.8h0M419.2 344.4h0M422.2 342.2h0M425.7 339.8h0M429.1 338.1h0M432.4 335.9h0M436.0 333.4h0M439.0 331.7h0M442.7 329.4h0M445.9 327.7h0M449.7 325.3h0M452.9 323.5h0M456.1 321.2h0M459.5 319.7h0M463.1 317.7h0M466.2 315.7h0M469.7 314.0h0M473.2 312.5h0M476.5 310.9h0M480.1 309.1h0M483.6 307.4h0M487.1 305.5h0M490.9 304.5h0M494.1 303.0h0M497.8 301.7h0M501.1 300.0h0M504.7 298.9h0M508.6 297.8h0M512.1 296.4h0M515.8 295.2h0M519.2 294.6h0M522.9 293.8h0M526.3 292.7h0M530.1 291.6h0M533.7 290.9h0M537.5 290.5h0M541.3 289.8h0M545.1 289.3h0M548.9 288.6h0M552.3 288.4h0M556.0 288.2h0M559.6 287.9h0M563.4 287.3h0M567.2 287.2h0M570.7 286.7h0M574.8 286.8h0M578.0 286.8h0M582.0 286.5h0M585.6 286.8h0M589.3 286.6h0M593.4 286.6h0M596.8 286.6h0M600.6 287.0h0M604.2 287.0h0M607.8 287.4h0M611.6 287.6h0M615.3 287.8h0M618.8 287.6h0M623.1 288.1h0M626.6 288.3h0M630.2 288.4h0M633.7 288.9h0M637.7 289.1h0M641.4 289.4h0M645.1 289.9h0M648.7 290.6h0M652.4 291.1h0M656.0 292.0h0M659.5 292.6h0M663.5 293.5h0M667.1 294.4h0M670.7 294.9h0M674.3 296.1h0M678.1 296.9h0M681.6 297.7h0M685.6 298.9h0M689.0 299.6h0M692.6 300.7h0M696.4 302.4h0M699.8 303.3h0M703.4 304.7h0M706.7 306.8h0M709.4 309.2h0M660.8 284.8h0M663.6 286.4h0M666.7 287.9h0M669.9 289.3h0M672.9 290.5h0M675.9 292.1h0M679.0 293.8h0M681.8 295.3h0M684.7 296.7h0M688.0 298.0h0M690.5 299.6h0M693.7 300.9h0M696.6 302.9h0M699.7 304.0h0M702.6 305.7h0M705.6 307.2h0M708.9 308.7h0M661.0 307.4h0M663.7 309.1h0M666.8 310.2h0M670.1 312.2h0M673.0 313.6h0M676.2 315.2h0M679.3 316.7h0M682.3 318.4h0M685.4 319.5h0M688.5 320.6h0M692.3 321.0h0M695.7 321.7h0M698.9 322.1h0M702.8 321.7h0M730.7 312.0h0M733.7 313.7h0M736.8 315.5h0M739.7 317.3h0M742.7 319.2h0M745.9 320.5h0M748.6 322.2h0M751.7 324.0h0M755.0 326.1h0M758.2 327.4h0M760.7 329.5h0M763.9 331.4h0M766.9 332.8h0M769.7 335.1h0M773.0 336.7h0M775.9 338.9h0M779.0 340.7h0M781.5 342.8h0M784.7 345.0h0M787.4 347.4h0M790.0 349.7h0M792.6 352.0h0M795.7 354.2h0M798.0 357.1h0M801.0 359.2h0M803.4 362.1h0M806.1 364.7h0M728.1 320.8h0M732.0 321.3h0M735.1 321.3h0M738.9 321.5h0M741.9 321.7h0M745.6 322.2h0M749.0 322.7h0M752.5 323.7h0M755.9 324.9h0M758.9 326.5h0M761.8 328.0h0M764.9 329.7h0M767.9 331.3h0M771.2 332.8h0M774.2 334.8h0M777.3 336.4h0M686.2 332.2h0M683.7 332.3h0M680.6 331.9h0M677.8 332.3h0M675.1 332.2h0M672.4 332.1h0M669.4 332.4h0M666.3 332.5h0M663.4 332.4h0M660.9 332.3h0M658.3 332.7h0M655.1 332.8h0M652.5 333.0h0M649.3 333.0h0M646.9 333.2h0M643.8 333.8h0M641.4 334.0h0M638.2 333.7h0M635.7 334.2h0M632.6 334.1h0M629.8 334.4h0M627.1 335.1h0M624.1 334.8h0M621.5 335.0h0M618.4 335.5h0M616.1 335.7h0M612.9 336.1h0M610.0 336.3h0M607.5 336.7h0M604.7 337.0h0M601.5 337.7h0M598.9 338.4h0M595.9 338.9h0M593.5 339.4h0M590.4 340.2h0M588.0 340.8h0M585.1 341.7h0M582.4 342.2h0M579.4 343.0h0M576.9 344.0h0M574.4 344.6h0M571.2 345.2h0M568.7 346.4h0M565.7 347.2h0M563.4 348.0h0M560.7 349.0h0M557.8 350.3h0M554.9 351.1h0M552.7 352.1h0M549.6 353.5h0M547.3 354.8h0M544.7 356.1h0M541.6 357.0h0M539.0 358.5h0M536.3 359.8h0M534.1 361.0h0M531.6 362.5h0M529.1 363.9h0M526.4 365.5h0M523.6 367.1h0M520.9 368.2h0M518.5 370.1h0M516.0 371.0h0M513.3 372.8h0M510.9 373.8h0M508.1 375.1h0M505.2 376.1h0M502.2 377.3h0M499.7 378.1h0M496.7 378.9h0M493.6 379.7h0M491.3 381.4h0M488.5 382.7h0M485.7 384.5h0M483.3 385.6h0M480.7 387.5h0M478.0 389.7h0M476.2 391.5h0M473.3 393.2h0M471.2 395.5h0M469.4 397.8h0M467.4 399.7h0M464.9 402.0h0M463.5 404.9h0M461.5 407.0h0M459.9 409.5h0M457.9 412.1h0M456.7 415.0h0M455.0 418.0h0M873.6 411.5h0M860.9 409.0h0M880.8 405.0h0M868.0 416.4h0M855.0 394.3h0M873.3 398.5h0M865.9 415.8h0M860.3 416.7h0M857.2 401.7h0M856.8 404.6h0M865.2 415.3h0M877.5 401.5h0M855.6 405.6h0M878.5 411.7h0M846.6 410.9h0M851.8 390.8h0M871.9 405.4h0M865.9 408.4h0M867.6 399.3h0M862.8 404.1h0M858.9 405.6h0M865.1 407.0h0M847.3 412.5h0M849.3 413.2h0M868.0 404.2h0M860.0 401.2h0M869.4 412.3h0M874.7 414.5h0M878.9 405.8h0M861.6 396.3h0M854.2 414.4h0M873.1 410.8h0M854.6 417.9h0M849.7 400.4h0M865.9 398.9h0M858.2 416.6h0M878.6 403.5h0M861.6 402.4h0M860.3 396.0h0M850.7 414.1h0M858.5 396.8h0M851.1 404.7h0M881.0 414.6h0M851.2 393.7h0M866.3 409.4h0M865.3 394.2h0M851.4 405.0h0M878.3 415.8h0M868.8 408.4h0M896.0 385.2h0M866.3 371.8h0M868.2 372.0h0M888.9 388.3h0M879.9 400.1h0M884.3 380.9h0M893.7 382.1h0M901.8 402.8h0M892.5 393.1h0M891.3 378.3h0M897.9 391.0h0M874.7 351.6h0M889.0 347.7h0M881.8 358.4h0M877.7 383.1h0M887.9 380.7h0M891.0 399.6h0M887.0 382.6h0M899.1 389.1h0M897.3 365.6h0M869.4 369.2h0M897.0 389.7h0M869.2 389.1h0M878.2 353.0h0M878.3 349.5h0M878.4 365.1h0M903.5 396.5h0M878.6 397.4h0M900.0 396.4h0M892.0 377.4h0M882.6 387.2h0M893.3 369.3h0M897.3 359.1h0M877.3 378.1h0M902.7 356.2h0M897.3 383.3h0M900.5 360.0h0M889.2 398.4h0M898.9 386.0h0M897.0 381.8h0M884.4 353.0h0M901.6 343.2h0M873.4 356.0h0M897.1 352.3h0M893.7 353.2h0M865.6 378.4h0M872.2 389.8h0M874.6 384.1h0M887.9 400.1h0M892.8 344.3h0M892.8 365.3h0M889.2 363.2h0M863.3 382.8h0M892.9 357.9h0M903.4 358.6h0M895.2 388.5h0M888.4 379.9h0M900.6 375.1h0M874.0 358.7h0M894.8 391.3h0M844.7 353.5h0M840.4 352.4h0M836.4 345.7h0M808.8 378.4h0M803.8 378.1h0M835.7 355.5h0M842.0 356.6h0M848.9 350.5h0M810.1 365.8h0M834.1 355.6h0M846.7 353.6h0M823.7 373.8h0M809.3 372.9h0M821.0 346.6h0M801.7 372.4h0M820.4 357.0h0M849.3 352.7h0M833.3 353.0h0M796.5 379.1h0M817.4 374.5h0M829.5 358.6h0M829.1 355.9h0M826.8 366.0h0M814.4 365.2h0M817.9 350.1h0M824.5 366.8h0M809.5 382.7h0M822.3 361.9h0M822.6 353.2h0M826.0 357.6h0M811.6 377.6h0M817.6 371.3h0M806.2 366.0h0M811.4 361.6h0M832.4 365.5h0M810.8 377.5h0M813.4 369.0h0M841.5 354.2h0M820.9 363.6h0M818.9 351.6h0M802.8 375.7h0M807.7 383.7h0M829.6 364.1h0M811.9 360.6h0M847.3 349.8h0" stroke="#ffffff" stroke-width="1.50" stroke-linecap="square" fill="none"/><path d="M361.3 333.5h0M367.4 330.1h0M373.6 327.1h0M379.6 324.2h0M385.7 320.9h0M391.9 318.1h0M398.6 314.5h0M404.4 311.6h0M410.7 308.7h0M416.5 305.8h0M422.5 302.3h0M428.9 299.4h0M434.6 296.8h0M440.8 293.8h0M447.2 291.3h0M453.2 288.5h0M459.3 285.8h0M465.3 283.3h0M471.2 280.7h0M476.9 277.8h0M483.0 275.0h0M488.4 272.7h0M494.8 270.1h0M500.7 267.5h0M506.5 265.6h0M512.8 263.5h0M518.3 261.3h0M524.6 259.3h0M530.4 257.4h0M536.7 255.9h0M542.6 254.3h0M548.9 253.2h0M555.1 251.6h0M561.4 250.6h0M567.6 250.1h0M672.4 250.6h0M678.5 251.4h0M684.8 252.0h0M690.8 252.5h0M696.6 253.7h0M703.3 254.8h0M709.2 255.9h0M715.2 257.9h0M721.4 259.3h0M727.2 260.4h0M733.4 262.4h0M739.4 264.1h0M745.6 265.8h0M751.9 267.3h0M758.3 269.1h0M685.2 251.1h0M691.7 252.4h0M697.8 253.4h0M703.7 254.3h0M709.9 255.8h0M715.7 257.6h0M721.7 259.0h0M727.6 260.9h0M733.9 263.2h0M739.7 264.8h0M746.1 266.6h0M752.1 268.4h0M757.7 270.8h0M762.6 275.2h0M763.4 275.9h0M766.1 280.5h0M768.3 285.3h0M771.2 289.8h0M774.1 294.5h0M776.7 299.6h0M779.2 304.2h0M781.9 309.2h0M783.6 314.0h0M785.5 319.4h0M787.3 324.9h0M789.0 330.2h0M790.4 336.2h0M791.9 341.3h0M793.6 346.9h0M795.5 352.8h0M796.6 358.2h0M763.0 275.8h0M768.8 276.6h0M773.6 277.5h0M778.5 279.2h0M783.5 281.1h0M788.6 283.7h0M793.3 285.7h0M798.1 288.4h0M802.8 290.9h0M807.6 293.7h0M811.8 296.7h0M816.5 299.3h0M821.5 302.7h0M825.9 305.2h0M830.6 308.3h0M835.0 311.9h0M839.4 314.9h0M843.6 318.7h0M848.5 322.5h0M852.1 326.1h0M856.3 330.0h0M860.1 334.6h0M863.7 339.1h0M374.6 382.0h0M379.5 377.1h0M384.6 372.7h0M390.0 368.7h0M395.2 364.8h0M400.3 360.7h0M406.1 356.4h0M411.2 352.5h0M416.7 349.2h0M422.0 345.5h0M427.5 342.0h0M433.0 338.8h0M438.7 335.1h0M444.1 332.4h0M450.3 329.4h0M455.5 326.6h0M461.4 323.1h0M466.7 320.4h0M472.0 317.0h0M477.6 314.5h0M483.5 311.1h0M488.9 308.4h0M494.3 305.4h0M499.7 302.5h0M505.1 299.5h0M510.0 296.5h0M515.5 293.5h0M520.8 290.9h0M526.3 288.0h0M531.5 285.6h0M537.1 283.1h0M542.6 280.6h0M548.0 278.3h0M553.6 276.4h0M559.1 274.2h0M564.3 272.5h0M570.0 270.3h0M575.5 268.6h0M581.3 267.2h0M586.7 265.5h0M592.2 263.9h0M597.9 262.4h0M603.5 261.4h0M609.3 259.9h0M614.7 259.2h0M620.5 258.1h0M626.2 257.1h0M631.6 255.9h0M637.3 255.4h0M643.4 255.3h0M806.4 319.5h0M704.6 329.5h0M687.4 286.7h0M764.7 313.4h0M666.7 272.4h0M691.9 256.6h0M820.2 254.6h0M832.7 297.0h0M651.1 283.9h0" stroke="#e5e5e5" stroke-width="1.62" stroke-linecap="square" fill="none"/><path d="M521.8 418.3h0M520.7 419.3h0M519.4 420.5h0M518.4 421.8h0M517.1 423.1h0M516.2 424.3h0M514.9 425.6h0M513.8 426.8h0M513.0 428.3h0M511.9 429.7h0M510.8 431.1h0M509.9 432.3h0M508.7 433.7h0M507.7 435.1h0M506.7 436.5h0M505.7 438.0h0M504.7 439.3h0M503.8 440.8h0M502.8 442.3h0M501.9 443.6h0M501.0 445.0h0M500.1 446.5h0M499.1 448.1h0M498.2 449.5h0M497.5 451.1h0M496.5 452.6h0M495.7 454.2h0M494.7 455.6h0M493.9 457.1h0M733.6 456.3h0M734.3 454.7h0M735.0 453.0h0M735.5 451.3h0M736.2 449.7h0M736.6 447.9h0M737.2 446.4h0M737.6 444.6h0M738.1 442.9h0M738.5 441.3h0M739.0 439.7h0M739.4 438.0h0M739.6 436.2h0M740.2 434.7h0M740.4 432.8h0M740.7 431.3h0M740.9 429.5h0M741.2 428.0h0M741.2 426.1h0M741.4 424.5h0M741.6 422.7h0M741.7 421.2h0M741.7 419.4h0M508.2 419.0h0M507.0 420.7h0M505.5 422.0h0M504.5 423.6h0M502.9 424.8h0M501.9 426.6h0M500.4 427.8h0M499.3 429.5h0M498.1 431.1h0M496.8 432.5h0M495.6 434.1h0M494.2 436.0h0M493.2 437.3h0M491.7 439.1h0M490.6 440.7h0M489.3 442.3h0M488.4 444.3h0M487.0 445.8h0M486.2 447.3h0M485.1 449.1h0M483.9 451.0h0M482.9 452.7h0M481.8 454.6h0M480.7 456.4h0M467.4 418.1h0M465.7 420.4h0M464.5 422.6h0M462.8 424.7h0M461.2 427.0h0M460.0 429.2h0M458.5 431.5h0M456.7 434.1h0M455.7 436.7h0M454.0 439.4h0M452.6 441.7h0M451.5 444.4h0M450.4 446.9h0M448.9 449.3h0M447.7 452.2h0M446.8 454.8h0M445.5 457.3h0M476.8 418.5h0M475.0 420.4h0M473.3 422.8h0M471.9 425.2h0M470.0 427.5h0M469.0 429.8h0M467.1 432.0h0M465.7 434.4h0M464.9 437.2h0M463.5 439.8h0M462.5 442.3h0M461.2 444.9h0M460.4 447.6h0M459.6 450.2h0M458.9 453.1h0M458.4 455.7h0M444.8 418.6h0M443.0 421.3h0M440.5 423.8h0M438.4 426.8h0M436.8 429.5h0M434.6 432.2h0M432.8 435.2h0M430.7 437.9h0M428.5 440.8h0M426.9 444.1h0M424.6 447.3h0M422.7 450.0h0M420.8 453.0h0M419.3 456.1h0M369.6 419.8h0M369.8 424.1h0M370.2 428.2h0M371.2 432.9h0M371.4 437.3h0M372.6 441.9h0M373.6 446.1h0M375.5 450.8h0M376.5 454.9h0M396.3 419.9h0M395.6 424.5h0M395.4 429.7h0M395.8 434.5h0M395.9 439.7h0M396.7 444.5h0M397.6 449.6h0M398.6 454.6h0M780.6 457.6h0M781.6 455.0h0M782.2 452.7h0M783.0 450.3h0M784.0 447.6h0M785.2 445.2h0M786.1 442.8h0M786.9 440.2h0M787.7 437.9h0M788.1 435.3h0M789.0 432.8h0M790.0 430.3h0M790.4 427.6h0M791.5 425.4h0M792.2 422.4h0M792.8 419.9h0M791.2 457.4h0M792.1 454.7h0M793.0 451.9h0M794.2 449.4h0M794.8 446.8h0M795.5 443.8h0M796.3 441.3h0M797.5 438.2h0M798.2 435.8h0M798.7 432.8h0M799.6 430.4h0M800.1 427.5h0M801.0 424.7h0M801.6 422.2h0M802.0 419.5h0M397.8 430.1h0M397.0 434.8h0M396.5 439.7h0M395.5 445.2h0M394.9 450.2h0M394.2 454.8h0M775.9 418.6h0M776.1 421.4h0M776.5 423.7h0M777.1 425.8h0M776.9 428.0h0M777.4 430.4h0M777.1 433.1h0M776.8 435.4h0M776.6 437.9h0M776.5 440.2h0M776.0 442.6h0M775.6 444.9h0M775.1 447.7h0M774.7 450.1h0M773.7 452.5h0M773.3 454.8h0M772.5 457.1h0M780.2 418.7h0M780.2 421.0h0M780.5 423.0h0M780.9 425.4h0M781.1 428.2h0M781.2 430.5h0M781.0 432.9h0M781.2 435.3h0M781.0 437.8h0M780.5 439.7h0M780.3 442.6h0M779.7 444.9h0M779.5 447.4h0M778.5 449.6h0M777.8 451.8h0M777.6 454.3h0M776.8 456.7h0M794.9 420.4h0M793.9 422.7h0M793.6 424.9h0M792.8 427.8h0M792.3 430.1h0M791.7 432.6h0M790.8 435.2h0M790.3 437.8h0M789.3 440.3h0M788.1 442.9h0M787.3 445.2h0M786.0 447.4h0M785.2 450.2h0M784.2 452.3h0M782.7 454.9h0M782.0 457.1h0M866.6 452.5h0M867.1 447.1h0M867.2 441.4h0M453.3 420.9h0M452.0 423.6h0M450.7 426.0h0M449.2 428.9h0M447.5 431.9h0M446.6 434.7h0M444.9 437.6h0M443.9 440.8h0M442.4 443.8h0M441.3 446.7h0M440.0 450.1h0M439.2 453.3h0M438.0 456.4h0M369.8 420.2h0M371.0 426.1h0M371.6 431.7h0M372.7 437.5h0M373.5 443.8h0M374.5 450.1h0M375.5 456.0h0M456.1 420.2h0M455.0 424.6h0M453.6 429.4h0M452.1 434.2h0M450.7 439.2h0M450.0 444.3h0M448.3 449.0h0M447.5 454.2h0M806.9 388.3h0M839.9 406.9h0M838.7 406.5h0M833.5 380.3h0M822.1 376.9h0M817.0 387.3h0M836.0 377.6h0M847.6 385.5h0M844.7 379.2h0M815.0 392.7h0M844.3 399.2h0M854.3 368.8h0M813.8 403.1h0M858.3 353.4h0M845.0 388.7h0M809.6 403.3h0M838.0 407.7h0M847.8 357.8h0M824.9 389.8h0M848.2 376.6h0M848.5 361.4h0M821.3 396.9h0M834.6 403.3h0M847.8 387.1h0M834.4 389.9h0M823.9 402.1h0M839.6 379.9h0M848.2 378.7h0M828.4 382.6h0M814.6 402.4h0M822.2 399.1h0M844.6 386.0h0M850.1 364.0h0M834.8 382.1h0M858.5 351.1h0M826.8 391.4h0M837.5 379.0h0M845.8 368.8h0M835.5 409.0h0M851.4 370.3h0M821.8 407.4h0M808.2 401.7h0M857.1 351.0h0M828.7 374.3h0M842.0 380.9h0M809.6 405.2h0M827.2 377.4h0M839.1 394.8h0M814.6 396.1h0M848.6 382.3h0M843.3 390.2h0M824.8 402.6h0M852.5 365.5h0M809.7 408.6h0M826.8 371.9h0M843.4 375.3h0M833.0 409.0h0M821.9 380.8h0M853.6 374.7h0M808.6 407.6h0M813.4 404.3h0M807.8 389.0h0M830.7 395.9h0M831.5 373.8h0M829.5 380.5h0M822.1 408.8h0M838.4 369.5h0M846.2 370.3h0M837.5 364.9h0M845.7 373.4h0M848.1 365.6h0M832.8 382.9h0M848.7 389.1h0M845.3 368.8h0M860.2 361.8h0M813.8 391.1h0M840.2 362.9h0M831.1 386.2h0M845.0 375.3h0M846.8 379.8h0M842.7 375.0h0M838.4 364.5h0M812.4 403.4h0M840.0 403.7h0M822.9 384.2h0M821.9 400.8h0M817.7 388.8h0M838.8 367.8h0M836.8 400.0h0M823.6 398.9h0M819.1 387.9h0M848.1 379.0h0M838.9 374.0h0M816.4 407.5h0M856.2 371.2h0M841.7 382.6h0M849.7 357.2h0M844.8 386.5h0M857.2 349.3h0M855.8 377.6h0M818.3 392.4h0M815.6 391.6h0M842.6 393.0h0M846.6 372.5h0M851.5 385.7h0M820.9 405.8h0M825.6 400.2h0M846.3 401.4h0M853.8 376.2h0M829.1 398.5h0M844.8 381.8h0M858.2 348.6h0M810.9 401.5h0M810.4 404.1h0M830.0 385.5h0M838.7 408.5h0M835.9 381.8h0M833.1 373.4h0M851.3 382.0h0M816.2 395.5h0M854.1 377.9h0M857.2 358.7h0M825.4 380.1h0M849.2 375.8h0M823.4 403.1h0M828.9 373.9h0M818.6 378.1h0M848.0 370.2h0M845.3 378.7h0M822.5 382.2h0M814.3 402.1h0M821.5 379.9h0M819.2 385.6h0M838.4 366.7h0M850.3 386.7h0M847.8 399.5h0M822.2 377.1h0M821.9 386.9h0M827.8 377.5h0M837.3 390.1h0M815.3 401.3h0M827.3 408.7h0M807.3 408.9h0M851.4 357.1h0M826.1 394.8h0M856.3 357.7h0M839.4 380.9h0M842.4 367.7h0M851.7 384.0h0M855.3 352.2h0M843.5 362.1h0M847.4 373.0h0M848.9 384.7h0M843.4 382.1h0M848.5 368.0h0M834.0 377.7h0M840.9 363.5h0M821.4 382.7h0M805.6 407.5h0M836.6 378.9h0M845.8 365.4h0M809.4 400.0h0M858.8 366.4h0M858.7 351.1h0M855.9 362.7h0M833.3 405.4h0M849.7 390.3h0M829.4 379.1h0M820.9 401.7h0M846.9 379.8h0M839.9 390.1h0M820.5 400.3h0M807.0 398.7h0M820.7 407.4h0M827.6 375.9h0M811.4 400.3h0M846.3 359.1h0M848.2 367.3h0M840.3 391.6h0M824.8 394.8h0M819.7 377.6h0M859.1 354.9h0M824.2 381.9h0M820.8 408.9h0M823.9 374.1h0M824.2 389.1h0M849.0 379.6h0M856.7 353.5h0M841.4 397.9h0M821.4 386.2h0M829.2 376.3h0M837.7 385.0h0M859.2 365.0h0M811.9 402.0h0M860.9 354.8h0M826.9 405.6h0M820.4 377.4h0M811.3 398.8h0M858.5 349.3h0M844.6 366.1h0M854.9 351.8h0M807.9 408.9h0M818.5 406.3h0M810.8 388.7h0M813.9 390.0h0M845.9 361.6h0M847.0 387.1h0M808.7 404.4h0M852.4 380.2h0M840.9 378.7h0M851.0 381.3h0M821.9 380.2h0M836.7 403.4h0M848.8 360.2h0M835.9 384.6h0M840.3 376.6h0M836.0 391.5h0M834.9 365.8h0M827.6 392.2h0M861.3 357.0h0M827.8 403.8h0M853.9 367.4h0M813.8 399.2h0M830.3 369.4h0M833.2 394.1h0M851.6 358.0h0M813.0 389.2h0M846.7 368.0h0M806.5 401.3h0M864.7 356.0h0M815.6 406.6h0M853.0 365.2h0M864.1 356.9h0M854.0 353.0h0M853.0 382.1h0M853.6 368.5h0M849.0 379.6h0M851.5 359.5h0M814.4 393.9h0M820.7 396.5h0M848.7 391.2h0M843.9 391.9h0M805.6 401.3h0M836.6 389.0h0M836.4 396.7h0M838.3 373.6h0M832.8 401.8h0M844.7 369.1h0M811.9 383.8h0M829.6 404.7h0M845.4 395.9h0M839.7 395.7h0M840.3 385.5h0M847.9 394.0h0M845.6 363.2h0M834.6 396.7h0M844.0 405.9h0M810.4 397.1h0M830.5 390.2h0M857.8 351.6h0M836.0 398.5h0M812.1 404.8h0M839.0 408.8h0M831.0 389.5h0M854.2 354.0h0M823.2 380.9h0M811.7 390.7h0M834.1 370.9h0M852.3 353.8h0M837.8 369.9h0M841.8 363.3h0M831.6 380.9h0M828.0 383.4h0M835.8 395.7h0M828.2 393.0h0M817.2 386.8h0M858.3 352.5h0M842.4 401.4h0M852.2 356.3h0M841.9 391.4h0M815.9 383.6h0M845.9 375.3h0M830.5 377.1h0M848.3 375.8h0M819.8 383.4h0M824.0 400.6h0M807.6 388.1h0M825.6 374.0h0M837.0 383.3h0M817.0 398.1h0M834.5 396.3h0M847.3 382.4h0M808.7 386.2h0M843.8 407.0h0M805.8 393.2h0M840.4 378.3h0M826.4 380.7h0M825.7 401.8h0M834.9 379.1h0M856.3 354.2h0M834.9 376.1h0M829.7 378.9h0M811.4 395.7h0M858.3 349.3h0M821.2 398.2h0M825.5 407.2h0M823.9 401.9h0M811.2 390.5h0M849.7 384.1h0M809.0 407.0h0M850.9 377.4h0M816.7 387.6h0M841.2 380.4h0M852.1 381.1h0M824.2 390.2h0M850.5 374.7h0M853.9 368.6h0M811.3 406.7h0M808.9 406.8h0M850.4 385.4h0M850.2 376.0h0M812.6 383.0h0M831.6 376.0h0M831.3 369.9h0M823.1 393.0h0M846.7 397.2h0M848.8 367.5h0M813.6 406.1h0M828.0 381.0h0M837.1 365.8h0M808.7 387.7h0M848.7 391.9h0M829.1 402.5h0M858.9 351.1h0M844.9 379.7h0M837.8 401.4h0M844.0 408.0h0M812.1 400.2h0M824.5 406.7h0M851.0 372.1h0M836.9 397.6h0M839.6 393.4h0M825.8 386.1h0M849.8 371.5h0M827.5 380.9h0M834.5 401.3h0M828.9 389.1h0M835.6 394.2h0M828.5 383.9h0M840.7 376.5h0M825.5 389.0h0M821.5 383.4h0M846.9 380.4h0M850.6 387.2h0M810.1 389.4h0M834.4 396.1h0M856.7 361.5h0M855.2 375.7h0M832.7 379.0h0M847.1 387.5h0M822.9 384.3h0M827.7 408.4h0M864.8 355.0h0M846.0 404.4h0M827.1 394.0h0M830.6 388.5h0M813.1 386.4h0M842.8 370.4h0M825.0 399.6h0M831.0 375.4h0M823.9 393.9h0M857.0 372.7h0M830.7 398.9h0M837.4 371.9h0M826.9 397.7h0M846.0 390.5h0M834.1 383.2h0M853.9 378.8h0M833.9 378.2h0M825.4 397.2h0M827.9 390.5h0M818.5 407.6h0M840.9 399.4h0M820.2 400.9h0M832.4 403.8h0M840.1 402.6h0M834.5 408.4h0M833.2 406.1h0M830.6 408.1h0M817.9 407.3h0M829.2 406.1h0M811.9 404.7h0M816.2 405.1h0M833.2 407.9h0M815.7 404.7h0M841.3 402.5h0M814.8 408.2h0M829.1 407.7h0M830.3 401.8h0M832.5 401.4h0M831.2 402.1h0M806.6 407.6h0M819.4 403.6h0M834.5 400.9h0M822.8 402.9h0M812.0 404.1h0M815.4 406.9h0M835.3 408.8h0M821.6 403.3h0M806.7 408.8h0M813.7 404.7h0M823.1 407.9h0M834.5 400.9h0M838.6 406.7h0M821.3 402.1h0M805.3 407.1h0M808.5 402.5h0M824.5 404.8h0M809.1 409.0h0M838.7 406.8h0M839.4 401.8h0M837.6 408.4h0M811.3 401.6h0M807.3 408.0h0M839.7 399.7h0M839.4 406.8h0M830.2 400.2h0M829.5 400.9h0M829.2 407.5h0M827.8 399.8h0M839.8 398.9h0M831.0 402.3h0M831.4 399.9h0M817.9 402.3h0M821.6 401.6h0M822.3 400.4h0M832.6 403.6h0M841.2 400.6h0M812.9 407.1h0M838.9 399.1h0M821.6 405.9h0M834.0 403.2h0M807.8 407.1h0M840.4 402.5h0M835.9 405.1h0M834.9 408.1h0M839.7 403.7h0M824.2 401.7h0M810.0 405.9h0M828.3 408.9h0M830.9 400.0h0M834.1 405.5h0M837.5 400.4h0M804.6 438.4h0M804.6 435.3h0M804.6 432.6h0M804.4 429.4h0M809.1 441.1h0M809.2 438.2h0M808.9 434.9h0M814.0 443.9h0M813.6 440.7h0M813.7 437.4h0M813.6 434.8h0M818.8 446.4h0M819.0 443.4h0M818.6 440.3h0M818.9 437.7h0M823.4 449.0h0M823.0 446.1h0M823.3 442.8h0M823.5 440.3h0M827.9 451.4h0M828.0 448.6h0M828.4 445.4h0M827.8 442.7h0M832.7 454.2h0M832.4 451.6h0M832.5 448.4h0M837.2 457.1h0M837.2 453.8h0M837.8 450.7h0M837.7 448.3h0M841.9 456.8h0M842.2 453.6h0M841.9 450.3h0M846.5 456.3h0M846.7 453.4h0M860.0 422.8h0M878.6 430.3h0M860.0 431.5h0M867.1 447.3h0M856.0 424.0h0M871.3 436.6h0M863.3 422.1h0M857.6 425.2h0M868.9 425.5h0M875.9 437.3h0M875.3 430.4h0M870.4 433.7h0M869.8 423.0h0M859.8 433.8h0M878.1 424.0h0M880.3 432.7h0M854.8 420.7h0M849.6 419.0h0M882.4 419.8h0M864.7 435.4h0M867.6 449.4h0M866.7 444.6h0M869.5 443.2h0M871.6 418.3h0M859.0 419.3h0M879.8 424.7h0" stroke="#ffffff" stroke-width="1.62" stroke-linecap="square" fill="none"/><path d="M493.2 458.7h0M492.4 460.4h0M491.6 461.9h0M490.8 463.5h0M490.0 465.1h0M489.2 466.7h0M488.5 468.4h0M487.8 470.0h0M487.2 471.5h0M486.4 473.3h0M485.8 474.8h0M485.0 476.6h0M484.3 478.2h0M483.7 480.0h0M483.2 481.7h0M482.5 483.4h0M482.0 485.0h0M481.6 486.9h0M480.9 488.7h0M480.5 490.3h0M480.2 492.2h0M479.5 493.9h0M479.1 495.6h0M478.6 497.4h0M700.7 496.4h0M702.2 495.3h0M703.4 493.9h0M704.7 492.7h0M706.1 491.4h0M707.4 490.2h0M708.8 489.1h0M710.2 487.7h0M711.4 486.4h0M712.6 485.1h0M713.8 483.7h0M715.3 482.4h0M716.4 481.1h0M717.7 479.7h0M718.7 478.3h0M719.9 477.0h0M721.2 475.7h0M722.4 474.1h0M723.3 472.9h0M724.6 471.4h0M725.6 469.9h0M726.6 468.6h0M727.7 467.2h0M728.7 465.5h0M729.5 464.0h0M730.5 462.6h0M731.5 461.1h0M732.2 459.5h0M732.9 457.9h0M479.7 458.1h0M478.6 460.0h0M477.8 461.7h0M476.9 463.8h0M475.9 465.4h0M475.0 467.2h0M474.0 469.3h0M473.1 471.2h0M472.4 473.0h0M471.7 474.9h0M470.9 477.2h0M470.0 478.9h0M469.3 481.0h0M468.7 482.9h0M468.0 485.2h0M467.2 487.2h0M466.3 489.3h0M465.7 491.3h0M465.3 493.1h0M464.6 495.4h0M463.7 497.3h0M444.8 460.1h0M443.4 462.8h0M442.9 465.4h0M441.5 468.2h0M440.9 471.3h0M439.6 473.7h0M438.8 476.7h0M438.2 479.4h0M437.4 482.4h0M437.2 485.6h0M436.1 488.7h0M435.6 491.3h0M435.8 494.6h0M435.3 497.4h0M457.5 458.5h0M457.4 461.9h0M456.9 464.5h0M456.6 467.6h0M456.1 470.2h0M455.5 473.3h0M455.2 476.2h0M455.2 479.5h0M454.6 482.2h0M454.5 484.9h0M455.0 488.2h0M455.1 491.1h0M454.7 494.1h0M455.3 497.5h0M417.0 459.3h0M415.3 462.7h0M413.3 465.9h0M411.5 469.1h0M410.1 471.9h0M408.2 475.2h0M406.4 478.4h0M404.8 482.2h0M403.5 485.5h0M401.4 488.6h0M400.4 491.9h0M398.9 495.5h0M378.2 459.5h0M379.9 464.0h0M381.5 468.3h0M383.1 472.8h0M384.9 477.1h0M386.8 481.6h0M388.9 485.6h0M391.1 489.8h0M393.2 494.5h0M399.5 460.0h0M401.1 464.9h0M402.2 469.6h0M403.9 474.7h0M405.8 479.7h0M407.7 484.6h0M410.5 489.3h0M413.1 494.3h0M755.6 497.4h0M757.9 495.5h0M759.3 493.5h0M761.1 490.9h0M763.0 488.8h0M764.6 486.7h0M766.0 484.4h0M767.5 482.0h0M769.3 479.4h0M770.6 477.1h0M772.0 475.1h0M773.4 472.6h0M774.8 469.9h0M776.2 467.8h0M776.9 465.4h0M778.3 462.6h0M779.7 460.3h0M771.9 497.4h0M773.1 494.8h0M775.2 492.7h0M776.4 489.6h0M778.3 487.1h0M779.8 484.6h0M781.0 481.8h0M782.4 479.2h0M783.4 476.8h0M784.6 474.0h0M785.8 471.3h0M787.1 468.7h0M788.1 465.8h0M789.3 463.3h0M790.7 460.4h0M393.0 460.3h0M392.5 465.0h0M391.7 470.3h0M391.0 475.5h0M390.3 481.3h0M390.0 486.5h0M389.5 491.6h0M389.2 497.0h0M771.4 459.4h0M770.4 461.4h0M769.4 463.8h0M768.6 466.0h0M767.7 468.2h0M766.4 470.5h0M765.2 473.1h0M764.0 474.8h0M762.4 477.3h0M761.5 479.2h0M759.9 481.7h0M758.7 483.6h0M757.2 485.8h0M755.8 487.7h0M754.4 490.1h0M752.6 492.0h0M751.0 494.5h0M749.7 496.3h0M775.8 458.9h0M774.9 461.6h0M774.1 463.6h0M772.8 465.9h0M772.1 468.3h0M771.0 470.8h0M769.5 472.9h0M768.2 475.2h0M767.0 477.1h0M766.1 479.3h0M764.3 481.7h0M763.1 483.9h0M761.5 485.8h0M760.4 487.9h0M759.0 489.8h0M757.4 492.0h0M755.8 494.0h0M754.1 496.7h0M780.7 459.5h0M779.3 461.9h0M778.0 464.5h0M777.2 467.3h0M775.5 469.3h0M774.7 471.6h0M773.0 474.2h0M771.5 476.5h0M770.3 479.0h0M769.2 481.3h0M767.3 484.0h0M766.0 486.3h0M764.5 488.6h0M762.7 490.5h0M761.3 492.9h0M759.5 495.3h0M757.9 497.3h0M829.3 460.3h0M827.5 463.0h0M826.1 466.4h0M825.1 469.3h0M823.3 472.1h0M821.7 475.3h0M820.6 478.1h0M818.3 480.9h0M816.5 484.2h0M814.8 486.7h0M812.3 489.2h0M810.2 492.3h0M808.2 495.2h0M839.2 469.9h0M839.0 473.8h0M838.1 477.4h0M838.1 481.4h0M837.5 484.9h0M836.8 488.4h0M836.5 492.2h0M835.2 496.0h0M854.0 475.4h0M854.6 478.6h0M854.7 482.8h0M855.1 486.2h0M855.8 490.2h0M856.1 493.9h0M856.1 497.3h0M881.5 487.8h0M879.7 491.5h0M876.9 495.2h0M856.4 491.6h0M858.9 486.2h0M861.1 481.0h0M862.4 475.3h0M864.0 469.3h0M865.5 463.6h0M866.0 458.2h0M865.7 496.4h0M437.4 459.5h0M436.5 462.7h0M435.5 465.7h0M435.0 469.0h0M434.3 472.7h0M434.3 476.0h0M433.7 479.4h0M433.8 482.7h0M433.2 486.1h0M433.0 489.3h0M376.4 462.2h0M377.2 467.9h0M378.5 474.6h0M379.0 480.5h0M380.0 487.2h0M380.9 493.1h0M446.2 459.0h0M445.6 464.4h0M444.5 469.7h0M443.9 474.8h0M443.4 479.9h0M443.2 485.3h0M442.5 490.7h0M442.7 496.3h0M821.5 410.0h0M807.4 411.6h0M812.9 410.3h0M805.7 409.4h0M835.0 409.6h0M820.2 409.1h0M828.6 410.3h0M816.1 411.2h0M843.3 409.1h0M813.2 411.6h0M838.5 409.3h0M838.0 410.7h0M825.4 411.4h0M841.2 410.2h0M825.1 411.5h0M807.2 409.4h0M814.4 410.4h0M810.5 410.5h0M818.5 411.6h0M820.7 414.8h0M804.4 413.1h0M823.4 412.3h0M817.8 411.5h0M827.4 413.6h0M834.9 411.7h0M817.8 409.5h0M835.2 413.5h0M818.6 411.8h0M821.2 415.8h0M817.6 414.0h0M810.5 413.0h0M826.7 417.1h0M803.3 425.2h0M828.1 409.2h0M828.4 409.3h0M808.4 421.7h0M813.9 412.7h0M804.8 414.1h0M804.9 416.7h0M805.7 424.0h0M833.7 415.8h0M826.8 412.1h0M829.8 411.7h0M815.3 409.1h0M817.0 409.9h0M817.5 420.1h0M810.6 411.2h0M814.6 414.1h0M829.4 416.9h0M811.0 421.7h0M815.3 411.5h0M805.1 417.3h0M806.1 413.4h0M807.0 417.1h0M824.9 414.3h0M813.3 412.0h0M825.2 414.2h0M803.6 420.8h0M809.7 415.7h0M825.0 410.6h0M809.8 410.8h0M809.7 418.6h0M805.9 425.1h0M806.4 416.1h0M833.9 411.4h0M820.8 412.2h0M831.2 409.9h0M835.1 414.6h0M814.6 421.4h0M805.7 413.1h0M807.3 421.8h0M832.9 409.8h0M810.4 409.7h0M803.9 416.5h0M831.0 416.0h0M809.9 415.9h0M814.4 411.4h0M832.5 413.8h0M833.6 413.1h0M818.8 421.1h0M821.2 412.9h0M807.8 416.4h0M811.0 419.1h0M835.7 411.1h0M818.2 417.7h0M828.7 415.9h0M811.1 415.5h0M825.4 415.1h0M810.5 411.2h0M822.5 412.2h0M807.3 421.6h0M806.3 421.2h0M816.0 412.4h0M833.7 412.0h0M808.5 416.8h0M808.3 423.2h0M825.6 414.6h0M818.0 418.6h0M810.4 410.7h0M817.2 415.1h0M831.2 410.7h0M806.9 414.6h0M815.9 419.1h0M832.1 409.4h0M809.2 419.4h0M831.6 413.7h0M813.0 417.3h0M821.7 414.3h0M835.8 409.4h0M804.9 413.8h0M835.5 413.1h0M809.5 421.8h0M808.5 414.6h0M818.4 416.8h0M816.4 412.5h0M827.2 409.2h0M818.6 409.1h0M812.9 422.3h0M810.5 422.4h0M814.7 418.2h0M822.3 418.7h0M824.2 422.1h0M822.0 420.8h0M810.5 419.5h0M825.1 421.7h0M820.7 418.7h0M814.3 418.2h0M811.2 422.3h0M823.0 419.7h0M813.8 421.0h0M823.7 420.7h0M817.4 420.9h0M815.4 421.2h0M808.1 421.4h0M810.5 419.6h0M814.7 421.0h0M815.4 421.5h0M820.1 420.6h0M815.9 421.7h0M803.7 422.3h0M803.9 422.0h0M842.4 459.6h0M847.0 462.3h0M846.5 459.4h0M851.3 465.0h0M851.7 461.8h0M851.9 459.1h0M856.4 467.7h0M856.3 464.7h0M856.3 461.4h0M856.6 458.6h0M860.7 470.2h0M861.0 467.1h0M860.6 464.1h0M860.9 461.2h0M865.3 472.8h0M865.7 469.7h0M865.3 467.1h0M865.9 464.2h0M870.3 475.6h0M870.2 472.7h0M870.1 469.8h0" stroke="#ffffff" stroke-width="1.75" stroke-linecap="square" fill="none"/><path d="M812.1 251.2h0M812.5 261.0h0M812.9 272.0h0M812.8 282.6h0M813.3 293.4h0M813.1 304.4h0M879.9 254.4h0M884.0 262.4h0M887.1 270.2h0M889.3 279.1h0M892.8 288.2h0M894.9 297.0h0M896.3 306.7h0M897.9 316.5h0M898.9 326.3h0M852.3 252.6h0M854.6 261.1h0M856.2 269.6h0M858.3 278.9h0M859.7 288.1h0M861.4 297.3h0M861.8 306.9h0M862.9 316.5h0M863.7 326.3h0M639.2 251.6h0M646.2 257.0h0M653.8 262.0h0M661.2 267.3h0M668.0 273.4h0M674.8 279.6h0M681.3 286.3h0M688.2 292.6h0M695.3 298.8h0M702.1 305.6h0M708.3 312.6h0" stroke="#d1d1d1" stroke-width="1.88" stroke-linecap="square" fill="none"/><path d="M478.3 499.2h0M477.9 501.1h0M477.3 502.8h0M477.1 504.7h0M476.6 506.6h0M476.4 508.5h0M475.9 510.1h0M475.6 512.1h0M475.3 513.8h0M475.1 515.9h0M475.0 517.6h0M474.7 519.6h0M474.7 521.5h0M474.6 523.2h0M474.8 525.2h0M474.8 527.2h0M475.3 529.1h0M475.6 530.9h0M476.3 532.7h0M477.1 534.4h0M478.1 536.2h0M622.2 537.0h0M624.1 536.4h0M626.0 535.8h0M627.9 535.4h0M629.5 534.7h0M631.5 534.3h0M633.3 533.5h0M635.0 533.1h0M636.8 532.3h0M638.6 531.7h0M640.6 531.0h0M642.4 530.4h0M644.2 529.8h0M645.8 529.1h0M647.7 528.2h0M649.3 527.6h0M651.2 526.8h0M652.9 526.1h0M654.7 525.5h0M656.4 524.7h0M658.3 523.7h0M660.0 523.1h0M661.8 522.1h0M663.3 521.3h0M665.2 520.5h0M666.7 519.6h0M668.3 518.6h0M670.0 517.9h0M671.7 517.0h0M673.3 515.9h0M675.0 514.9h0M676.5 514.1h0M678.3 513.1h0M679.8 512.1h0M681.4 511.0h0M683.0 509.8h0M684.5 508.9h0M686.1 507.8h0M687.5 506.6h0M689.1 505.5h0M690.5 504.5h0M692.0 503.5h0M693.6 502.2h0M695.0 501.1h0M696.4 499.9h0M697.8 498.7h0M699.2 497.7h0M463.4 499.3h0M462.9 501.5h0M462.4 503.5h0M461.8 506.0h0M461.3 507.9h0M461.0 510.1h0M460.5 512.2h0M460.2 514.7h0M460.2 516.9h0M459.7 519.0h0M459.5 521.1h0M459.6 523.3h0M459.7 525.6h0M459.6 528.0h0M459.7 530.3h0M460.2 532.3h0M460.8 534.4h0M461.5 536.7h0M434.8 500.5h0M434.6 503.3h0M434.7 506.3h0M434.7 509.8h0M435.0 512.7h0M435.2 515.8h0M435.1 519.0h0M435.6 522.1h0M436.4 525.0h0M436.8 528.3h0M437.6 531.0h0M438.8 534.4h0M455.9 500.2h0M456.0 503.0h0M456.7 506.1h0M457.0 509.0h0M457.6 512.4h0M458.4 515.6h0M459.3 518.5h0M460.2 520.9h0M461.6 524.0h0M462.6 527.0h0M463.3 530.3h0M464.8 533.3h0M466.0 535.7h0M397.7 498.9h0M396.3 502.7h0M394.6 506.1h0M395.3 499.0h0M415.7 498.8h0M418.3 503.8h0M421.2 508.0h0M713.3 536.3h0M715.3 534.6h0M717.8 532.8h0M719.8 530.8h0M722.2 529.1h0M724.8 527.5h0M727.0 525.7h0M729.3 523.6h0M731.4 521.3h0M733.4 519.7h0M735.4 517.8h0M737.9 515.8h0M739.8 513.7h0M741.7 512.1h0M743.6 509.7h0M746.1 507.8h0M747.7 505.9h0M749.9 503.9h0M751.9 501.8h0M754.0 499.6h0M734.9 535.5h0M737.4 533.5h0M739.8 531.2h0M742.3 529.1h0M744.6 527.3h0M747.0 524.9h0M749.2 523.1h0M751.3 520.5h0M753.5 518.7h0M755.4 515.9h0M757.8 514.0h0M760.1 511.6h0M762.3 509.2h0M764.1 506.8h0M765.7 504.5h0M767.7 502.3h0M769.8 499.7h0M388.9 502.6h0M388.7 508.1h0M388.7 513.2h0M388.5 518.9h0M388.7 524.4h0M388.1 530.4h0M388.4 535.9h0M361.8 510.1h0M366.8 511.8h0M372.0 513.5h0M377.1 515.4h0M382.7 517.6h0M388.0 519.0h0M393.2 520.9h0M398.5 522.7h0M403.7 524.5h0M408.8 525.9h0M414.7 527.3h0M420.0 529.2h0M425.2 530.5h0M430.9 532.0h0M436.2 533.7h0M441.4 535.8h0M748.0 498.3h0M746.4 500.5h0M744.9 503.0h0M743.7 505.0h0M741.7 506.9h0M740.3 509.2h0M738.5 511.1h0M736.4 513.0h0M734.9 515.0h0M732.5 516.8h0M730.7 518.2h0M752.8 498.8h0M751.1 500.6h0M749.5 502.8h0M748.4 504.9h0M746.5 507.3h0M745.2 509.2h0M743.0 511.2h0M741.5 513.4h0M739.5 515.1h0M737.7 516.7h0M735.7 518.6h0M755.9 499.9h0M754.2 501.7h0M752.5 503.9h0M750.8 506.0h0M749.1 508.6h0M747.0 511.0h0M745.0 512.7h0M743.0 515.1h0M741.6 517.4h0M739.5 519.6h0M806.4 497.8h0M804.0 500.5h0M801.7 502.9h0M799.8 505.9h0M797.5 508.6h0M795.3 511.8h0M793.6 514.6h0M791.6 517.1h0M789.2 519.9h0M787.1 523.0h0M784.4 525.3h0M782.2 528.4h0M780.0 530.8h0M777.9 534.0h0M834.4 499.5h0M833.6 503.4h0M832.7 507.2h0M831.5 510.5h0M830.4 514.1h0M828.9 517.9h0M827.6 521.8h0M825.9 525.4h0M824.8 528.9h0M857.1 501.5h0M857.0 504.8h0M857.7 509.1h0M858.3 512.8h0M859.2 516.6h0M859.5 520.2h0M859.1 524.0h0M859.5 528.0h0M859.6 532.3h0M859.1 536.3h0M875.0 498.9h0M872.9 502.6h0M870.9 506.6h0M868.6 510.1h0M867.1 514.2h0M865.4 518.2h0M864.2 522.4h0M862.9 527.1h0M831.0 533.3h0M835.0 528.3h0M839.0 523.6h0M842.4 518.4h0M845.9 513.2h0M848.5 508.1h0M851.8 502.5h0M854.3 497.5h0M857.4 531.9h0M859.9 526.2h0M861.4 520.1h0M862.7 514.5h0M864.1 508.3h0M864.7 502.3h0M382.1 499.5h0M382.9 506.2h0M383.8 512.5h0M384.7 519.3h0M385.6 526.0h0M386.4 532.6h0M442.7 501.5h0M442.8 507.0h0M443.3 512.7h0M443.7 517.7h0M444.1 523.4h0M444.7 529.2h0M445.6 534.7h0M361.1 510.6h0M366.6 513.3h0M371.5 516.5h0M377.2 519.1h0M382.4 521.9h0M388.2 524.3h0M393.9 526.7h0M399.8 528.4h0M406.0 530.3h0M411.5 532.2h0M418.0 533.6h0M423.6 535.4h0M429.6 536.4h0M825.5 431.3h0M825.4 446.3h0M829.0 430.0h0M815.2 436.7h0M826.7 424.8h0M814.3 430.4h0M825.2 425.8h0M812.6 433.4h0M808.4 430.8h0M826.6 433.4h0M801.9 428.0h0M820.3 424.0h0M813.8 435.3h0M819.7 434.8h0M814.5 437.6h0M802.1 422.9h0M831.3 436.7h0M826.8 429.4h0M811.5 439.9h0M820.2 447.6h0M805.7 427.8h0M824.6 447.4h0M816.6 443.2h0M803.8 438.1h0M811.7 440.0h0M809.5 441.0h0M825.4 447.6h0M825.6 432.9h0M808.0 441.9h0M816.3 446.5h0M828.7 434.4h0M814.2 434.4h0M805.3 436.1h0M809.6 429.2h0M816.5 426.0h0M806.0 439.1h0M807.9 425.7h0M812.9 432.9h0M820.4 437.6h0M809.1 428.2h0M827.7 432.6h0M802.4 428.3h0M829.1 431.0h0M813.9 438.1h0M801.4 438.4h0M814.8 445.6h0M809.3 434.3h0M812.3 435.1h0M813.9 427.9h0M816.6 428.6h0M830.9 428.7h0M819.3 425.3h0M833.9 435.6h0M812.1 435.0h0M829.4 435.6h0M829.6 438.1h0M823.1 426.5h0M827.2 434.2h0M827.5 439.5h0M829.9 440.1h0M815.4 433.3h0M829.6 436.5h0M816.6 443.8h0M800.7 429.8h0M808.9 437.0h0M812.6 437.0h0M832.0 430.2h0M829.8 432.2h0M811.4 432.3h0M820.4 423.6h0M823.0 438.1h0M810.3 423.3h0M809.8 441.8h0M800.8 436.3h0M830.3 437.9h0M821.5 430.7h0M829.3 434.4h0M812.5 433.1h0M816.8 422.4h0M823.9 444.9h0M814.4 442.5h0M804.6 433.5h0M824.3 434.5h0M821.4 434.1h0M825.6 429.0h0M824.9 440.1h0M815.6 432.1h0M804.3 436.4h0M808.5 431.2h0M807.1 441.0h0M826.3 439.7h0M825.5 434.9h0M823.3 444.6h0M818.0 426.0h0M823.7 437.9h0M818.2 431.7h0M805.5 433.0h0M817.4 429.4h0M828.0 424.6h0M808.3 441.1h0M809.7 430.1h0M816.7 424.5h0M800.8 431.2h0M826.4 434.9h0M824.3 425.0h0M814.0 442.0h0M819.2 447.0h0M815.3 423.9h0M828.9 430.4h0M815.8 446.4h0M810.5 431.5h0M819.2 438.4h0M811.9 437.7h0M815.0 444.8h0M819.8 441.1h0M820.4 440.1h0M812.9 427.2h0M818.7 432.6h0M830.6 430.1h0M812.2 431.0h0M827.4 431.9h0M826.7 433.7h0M826.4 433.1h0M820.7 430.5h0M820.2 435.3h0M803.6 435.5h0M827.6 424.8h0M825.4 425.7h0M821.2 442.8h0M818.6 424.4h0M810.9 435.2h0M802.4 423.9h0M822.6 429.9h0M827.2 441.1h0M813.1 436.4h0M805.1 437.1h0M823.0 424.1h0M834.6 434.9h0M807.6 441.3h0M821.9 429.0h0M824.7 442.3h0M824.2 423.5h0M806.7 424.4h0M808.4 441.3h0M800.6 437.1h0M814.5 440.6h0M809.2 432.5h0M830.8 428.6h0M813.1 434.7h0M804.9 430.2h0M804.6 438.5h0M819.4 428.7h0M825.4 423.5h0M821.6 430.4h0M827.1 431.1h0M816.1 423.0h0M804.9 440.1h0M813.2 435.4h0M813.1 425.2h0M819.9 442.9h0M825.0 444.8h0M815.0 431.1h0M803.3 425.0h0M815.0 444.8h0M811.0 424.4h0M800.7 434.4h0M819.6 423.3h0M809.2 437.9h0M831.1 430.5h0M804.6 435.7h0M825.3 435.3h0M809.6 424.5h0M812.5 436.2h0M807.8 432.1h0M820.6 426.5h0M821.5 434.7h0M819.4 436.5h0M822.2 446.6h0M821.6 442.7h0M833.1 436.4h0M829.5 435.0h0M817.1 440.7h0M815.1 434.7h0M827.5 424.0h0M818.5 442.7h0M821.2 439.4h0M821.4 448.0h0M819.1 428.1h0M814.1 429.6h0M824.6 435.6h0M809.0 426.3h0M806.8 440.2h0M824.7 428.6h0M804.1 436.6h0M812.0 435.0h0M807.9 430.7h0M829.7 426.6h0M807.6 429.5h0M827.4 435.8h0M832.7 431.0h0M828.6 435.7h0M815.6 428.7h0M824.2 425.8h0M809.3 422.6h0M820.3 426.8h0M800.3 435.1h0M801.0 435.3h0M800.8 432.2h0M822.0 434.7h0M813.1 434.8h0M814.7 443.2h0M805.9 423.8h0M816.0 434.8h0M800.1 429.4h0M818.4 436.7h0M829.9 427.3h0M821.6 449.0h0M802.2 440.4h0M802.7 438.2h0M802.8 435.9h0M803.0 433.4h0M802.8 431.1h0M803.2 428.7h0M803.1 426.4h0M803.3 424.2h0M806.7 442.9h0M806.8 440.6h0M807.4 438.4h0M807.7 435.9h0M807.8 433.8h0M808.0 431.5h0M807.7 429.4h0M811.6 445.5h0M811.5 443.7h0M812.0 441.1h0M812.4 438.9h0M812.2 436.8h0M812.3 434.0h0M812.5 431.6h0M813.1 429.7h0M812.8 427.1h0M816.1 448.6h0M816.5 445.9h0M816.9 443.8h0M816.8 441.6h0M817.2 439.1h0M817.5 436.8h0M817.4 434.6h0M817.5 432.4h0M820.9 450.9h0M821.2 448.7h0M821.2 446.4h0M821.7 444.1h0M821.9 441.6h0M821.6 439.6h0M821.7 437.1h0M822.3 434.9h0M825.5 453.5h0M826.2 451.5h0M825.8 449.0h0M826.5 446.6h0M826.4 444.6h0M826.5 442.4h0M826.5 439.6h0M827.1 437.8h0M830.9 456.4h0M831.0 454.2h0M831.0 452.0h0M830.8 449.2h0M831.1 447.2h0M830.9 444.7h0M831.6 442.7h0M835.4 456.6h0M835.4 454.3h0M836.1 452.4h0M836.2 450.1h0M836.1 447.5h0M836.1 445.4h0M836.5 443.1h0M836.3 440.4h0M840.0 456.8h0M840.3 454.6h0M840.3 452.5h0M841.0 450.0h0M841.2 448.0h0M840.7 445.7h0M845.4 455.0h0M845.5 453.0h0M845.9 450.7h0M846.0 447.9h0M850.2 455.7h0M850.3 453.1h0M854.9 455.5h0M854.9 453.7h0M859.7 456.2h0M864.5 456.7h0" stroke="#ffffff" stroke-width="1.88" stroke-linecap="square" fill="none"/><path d="M479.2 537.6h0M480.6 539.0h0M482.0 540.1h0M483.7 541.1h0M485.4 542.0h0M487.3 542.8h0M489.1 543.5h0M490.9 544.0h0M492.8 544.5h0M494.8 545.0h0M496.6 545.3h0M498.7 545.5h0M500.6 545.9h0M502.4 546.3h0M504.4 546.3h0M506.4 546.5h0M508.2 546.5h0M510.3 546.5h0M512.2 546.5h0M514.0 546.5h0M516.0 546.7h0M518.0 546.6h0M519.9 546.9h0M522.0 546.9h0M523.8 546.9h0M525.8 547.0h0M527.7 547.0h0M529.7 547.2h0M531.8 547.2h0M533.6 547.3h0M535.5 547.2h0M537.4 547.3h0M539.5 547.4h0M541.4 547.4h0M543.3 547.3h0M545.3 547.4h0M547.2 547.3h0M549.2 547.3h0M551.2 547.4h0M553.2 547.4h0M555.2 547.4h0M557.0 547.2h0M559.1 547.0h0M561.0 547.0h0M562.8 547.0h0M565.0 546.8h0M566.9 546.7h0M568.7 546.4h0M570.7 546.4h0M572.7 546.2h0M574.6 546.0h0M576.6 545.8h0M578.4 545.4h0M580.3 545.3h0M582.2 545.2h0M584.3 544.9h0M586.2 544.6h0M588.1 544.2h0M590.1 544.1h0M592.0 543.8h0M593.9 543.4h0M595.9 543.1h0M597.6 542.7h0M599.7 542.4h0M601.6 542.2h0M603.4 541.7h0M605.3 541.3h0M607.3 540.9h0M609.2 540.3h0M610.9 539.9h0M613.0 539.5h0M614.8 538.9h0M616.5 538.5h0M618.5 538.1h0M620.4 537.5h0M461.9 539.0h0M462.7 540.9h0M463.6 543.0h0M464.4 545.2h0M465.1 547.6h0M465.9 549.7h0M440.0 537.2h0M441.4 540.1h0M442.6 542.9h0M443.8 545.8h0M445.1 548.6h0M467.2 539.0h0M468.4 542.1h0M469.6 545.0h0M471.2 547.4h0M475.7 551.1h0M478.1 551.9h0M481.1 553.6h0M483.3 554.7h0M486.0 556.4h0M488.8 557.7h0M491.9 558.5h0M494.6 559.9h0M497.4 561.4h0M500.0 562.1h0M503.2 563.3h0M506.1 564.5h0M508.8 565.5h0M511.7 566.1h0M514.3 567.0h0M517.5 567.6h0M520.8 568.1h0M523.7 568.7h0M526.6 569.7h0M529.4 570.2h0M532.8 570.8h0M535.5 571.1h0M538.3 571.7h0M541.5 572.0h0M544.5 572.4h0M547.8 573.2h0M550.5 573.3h0M553.8 573.7h0M557.1 574.0h0M559.7 574.6h0M562.7 574.6h0M565.9 575.0h0M569.1 575.1h0M571.9 575.2h0M575.3 575.2h0M578.5 575.4h0M581.1 575.1h0M584.4 575.1h0M587.3 575.1h0M590.4 575.2h0M593.6 574.8h0M596.6 574.8h0M599.7 574.5h0M602.6 574.1h0M606.2 574.3h0M608.8 574.0h0M612.3 573.6h0M614.9 573.3h0M618.1 572.7h0M621.2 572.2h0M624.5 572.2h0M627.4 571.9h0M630.4 571.0h0M633.2 570.4h0M636.0 570.2h0M639.5 569.3h0M642.1 568.9h0M645.5 568.3h0M648.0 567.5h0M651.4 566.6h0M654.0 565.4h0M657.2 564.5h0M659.8 563.7h0M662.7 562.9h0M665.5 561.5h0M668.5 560.8h0M671.5 559.7h0M674.4 558.8h0M676.9 557.3h0M679.5 556.0h0M682.5 554.7h0M685.3 553.4h0M687.8 552.6h0M690.3 550.6h0M693.1 549.3h0M695.9 547.7h0M698.5 546.7h0M701.1 544.9h0M703.3 543.4h0M705.9 541.6h0M708.2 539.9h0M710.8 538.4h0M469.5 547.6h0M472.0 549.8h0M474.4 551.6h0M477.1 554.0h0M479.4 556.4h0M482.0 558.0h0M484.2 560.1h0M486.9 562.5h0M489.8 563.8h0M492.3 565.9h0M495.5 567.1h0M498.4 568.2h0M501.7 569.5h0M504.9 570.6h0M507.6 571.4h0M510.8 572.5h0M514.3 572.8h0M517.3 573.7h0M520.7 574.5h0M523.9 574.9h0M526.9 575.6h0M530.4 575.8h0M536.8 576.9h0M632.9 576.4h0M636.5 576.4h0M639.6 575.7h0M642.9 575.2h0M646.0 574.3h0M649.7 573.5h0M652.6 572.7h0M655.7 572.1h0M659.3 571.3h0M662.3 570.4h0M665.6 570.0h0M668.8 568.6h0M672.0 568.1h0M675.0 566.5h0M678.2 565.9h0M681.0 564.3h0M684.0 563.4h0M687.4 562.2h0M690.5 560.7h0M693.1 559.8h0M696.3 558.2h0M699.3 556.9h0M701.8 555.5h0M704.7 554.2h0M707.8 552.7h0M710.8 551.0h0M713.6 549.3h0M716.7 548.1h0M719.5 546.1h0M722.0 544.8h0M724.5 542.7h0M727.0 540.9h0M730.0 539.0h0M732.6 537.3h0M388.0 541.2h0M387.9 546.9h0M387.8 552.9h0M388.1 558.7h0M388.1 564.1h0M388.4 570.4h0M388.4 576.2h0M446.8 537.7h0M452.0 540.0h0M457.0 542.3h0M462.4 544.5h0M467.9 546.5h0M473.3 548.3h0M478.5 550.1h0M859.0 540.1h0M378.6 539.8h0M379.8 546.1h0M380.5 552.2h0M381.9 558.5h0M384.4 564.4h0M387.2 569.7h0M387.4 575.8h0M385.8 567.3h0M391.3 571.6h0M396.3 575.4h0M793.7 576.9h0M798.2 572.0h0M802.3 567.2h0M805.9 561.7h0M810.1 556.7h0M814.5 552.1h0M818.6 547.1h0M823.0 542.5h0M826.6 537.7h0M618.6 575.4h0M626.0 573.3h0M632.8 571.5h0M639.6 570.3h0M646.2 568.4h0M653.0 566.9h0M660.0 564.9h0M666.5 562.6h0M673.5 560.3h0M680.0 557.5h0M686.3 555.1h0M652.5 575.1h0M659.2 573.4h0M665.9 571.4h0M672.9 569.1h0M679.6 567.5h0M686.0 565.3h0M754.6 560.2h0M748.7 564.7h0M742.5 569.5h0M736.1 574.1h0M441.0 550.1h0M441.1 556.7h0M441.4 563.6h0M442.2 570.6h0M455.0 549.7h0M455.2 556.3h0M455.0 562.9h0M454.8 568.8h0M455.4 575.4h0M468.8 550.0h0M468.5 556.3h0M468.9 562.5h0M468.9 569.1h0M468.6 575.4h0M477.4 549.7h0M477.8 556.6h0M478.4 563.8h0M478.9 570.9h0M486.0 563.9h0M489.5 569.3h0M493.5 574.5h0M714.9 575.8h0M720.5 572.2h0M726.0 568.9h0M731.6 564.8h0M736.2 561.0h0M741.0 556.0h0M838.0 571.7h0M842.1 566.7h0M845.5 561.2h0M848.4 555.0h0M850.4 549.3h0M853.3 543.4h0M855.5 538.0h0M836.5 574.1h0M840.4 568.2h0M842.9 562.7h0M845.8 557.0h0M848.1 551.3h0M850.7 545.5h0M387.0 539.7h0M388.2 546.2h0M388.5 552.9h0M389.7 560.0h0M389.8 567.1h0M390.7 573.7h0M446.9 540.0h0M448.5 545.7h0M450.3 551.4h0M452.0 556.4h0M453.7 562.1h0M455.8 567.6h0M457.4 572.9h0M436.2 537.7h0M442.3 538.4h0M448.6 539.5h0M454.7 540.4h0M461.0 541.2h0M466.9 541.7h0M360.8 547.0h0M365.7 552.0h0M370.3 557.3h0M374.2 562.5h0M378.2 568.5h0M382.2 574.6h0M835.6 459.2h0M840.1 461.8h0M840.1 459.3h0M844.6 464.4h0M844.8 462.0h0M844.6 459.6h0M845.3 457.5h0M849.6 466.8h0M849.3 464.7h0M849.4 462.5h0M849.8 460.2h0M850.0 457.9h0M853.9 469.6h0M854.3 467.4h0M854.5 465.3h0M854.3 462.6h0M854.8 460.1h0M854.7 458.0h0M859.0 472.2h0M858.7 470.0h0M858.7 467.7h0M859.5 465.2h0M859.5 463.0h0M859.4 460.6h0M859.8 458.3h0M863.3 474.8h0M863.7 472.9h0M863.6 470.3h0M863.6 467.8h0M864.1 465.7h0M864.1 463.2h0M864.4 460.9h0M864.6 458.7h0M868.2 477.6h0M868.1 475.1h0M868.4 473.1h0M868.6 470.6h0M868.7 468.1h0M868.6 465.9h0M869.1 463.8h0" stroke="#ffffff" stroke-width="2.00" stroke-linecap="square" fill="none"/><path d="M533.7 576.9h0M540.4 577.4h0M543.5 578.0h0M546.8 578.4h0M550.3 579.0h0M553.8 578.8h0M556.9 579.5h0M560.4 579.7h0M563.6 579.9h0M566.7 579.9h0M570.3 580.4h0M573.7 580.4h0M576.7 580.5h0M580.3 580.5h0M583.6 580.4h0M586.8 580.4h0M589.9 580.3h0M593.4 580.6h0M596.8 580.1h0M600.0 579.9h0M603.4 579.7h0M606.5 579.9h0M610.1 579.4h0M613.4 579.0h0M616.5 578.6h0M619.9 578.3h0M623.5 578.1h0M626.9 577.5h0M630.2 577.2h0M388.7 582.4h0M389.1 588.2h0M389.1 593.9h0M389.4 600.3h0M389.7 606.1h0M390.1 612.0h0M387.2 582.5h0M387.6 588.9h0M387.2 595.9h0M387.0 602.1h0M387.4 609.0h0M388.5 615.9h0M401.1 579.6h0M405.9 584.1h0M410.9 588.5h0M416.0 592.7h0M421.3 596.5h0M427.4 599.4h0M433.2 602.4h0M439.2 605.9h0M444.8 609.4h0M451.4 611.7h0M457.8 614.1h0M739.5 614.5h0M745.5 612.1h0M751.9 608.9h0M757.6 605.6h0M763.8 602.3h0M769.4 598.9h0M774.1 594.7h0M779.1 590.3h0M784.6 586.0h0M789.3 581.7h0M361.2 606.4h0M368.1 606.9h0M375.6 607.5h0M383.0 608.3h0M390.1 609.3h0M397.8 609.8h0M404.8 610.3h0M412.0 610.8h0M419.5 611.7h0M427.0 611.9h0M434.5 611.9h0M441.7 611.9h0M449.0 612.4h0M456.5 612.4h0M463.8 612.1h0M471.1 611.2h0M478.1 610.3h0M485.8 609.0h0M492.6 607.6h0M500.3 606.4h0M507.4 604.6h0M514.7 603.7h0M521.5 602.2h0M528.8 600.2h0M535.4 597.9h0M542.5 595.8h0M549.7 594.0h0M556.5 592.0h0M563.8 590.1h0M570.7 588.1h0M577.7 585.9h0M584.3 584.4h0M591.4 582.9h0M598.3 580.9h0M605.3 579.2h0M612.2 577.6h0M533.8 607.8h0M540.5 604.8h0M547.7 602.6h0M554.4 600.7h0M561.9 599.9h0M568.9 598.7h0M576.2 597.1h0M583.4 594.6h0M590.1 592.9h0M597.1 591.6h0M604.4 589.9h0M610.9 587.9h0M618.0 585.4h0M625.1 583.8h0M631.6 581.8h0M638.8 579.3h0M645.1 577.6h0M730.1 577.8h0M723.4 582.0h0M716.1 585.6h0M709.5 588.7h0M702.1 592.1h0M695.5 595.7h0M688.6 599.2h0M681.2 603.0h0M675.0 607.1h0M668.9 613.1h0M893.4 609.8h0M897.2 603.2h0M900.5 596.1h0M904.0 588.4h0M444.5 577.3h0M448.0 583.8h0M450.1 590.2h0M453.5 596.9h0M456.8 603.3h0M459.0 610.6h0M455.6 581.8h0M456.8 588.7h0M457.0 594.9h0M458.4 601.8h0M459.6 608.0h0M461.3 615.0h0M469.2 582.2h0M470.0 588.8h0M470.1 595.2h0M470.3 601.7h0M470.6 608.3h0M479.8 578.0h0M481.1 584.9h0M482.3 591.9h0M484.3 599.0h0M486.7 605.5h0M489.9 612.5h0M497.8 579.8h0M502.0 584.2h0M506.6 589.1h0M511.2 593.8h0M516.7 597.5h0M522.4 600.5h0M528.3 604.0h0M533.6 608.3h0M539.1 611.8h0M545.3 614.8h0M411.8 615.7h0M631.9 615.9h0M638.0 613.2h0M644.4 611.7h0M650.9 609.7h0M657.6 607.8h0M663.6 605.2h0M668.6 600.4h0M674.1 596.6h0M679.9 593.1h0M686.1 590.2h0M691.6 587.4h0M697.7 584.6h0M703.7 581.9h0M709.7 578.7h0M773.6 616.0h0M779.9 613.7h0M786.3 611.4h0M792.3 608.5h0M798.2 605.9h0M804.5 602.5h0M810.0 599.3h0M816.2 595.6h0M821.2 591.7h0M825.7 587.0h0M830.0 582.1h0M834.0 577.3h0M785.5 615.6h0M791.3 611.9h0M797.2 608.8h0M803.1 605.4h0M808.7 601.8h0M813.6 597.8h0M818.9 593.0h0M823.8 588.9h0M828.6 584.3h0M832.7 579.0h0M391.0 581.1h0M391.3 588.1h0M392.2 595.4h0M392.9 602.6h0M393.7 609.5h0M459.5 578.7h0M461.6 583.9h0M464.1 589.4h0M466.4 595.1h0M469.2 600.5h0M472.1 605.8h0M474.9 610.9h0M385.3 580.3h0M389.1 586.8h0M391.7 593.7h0M394.4 600.4h0M397.2 607.1h0M399.1 613.8h0" stroke="#ffffff" stroke-width="2.12" stroke-linecap="square" fill="none"/><path d="M390.8 618.1h0M389.7 622.4h0M391.3 628.7h0M392.7 636.0h0M394.1 642.5h0M396.0 649.0h0M397.9 655.8h0M463.7 617.5h0M469.3 620.6h0M476.0 622.3h0M482.8 624.4h0M489.3 626.2h0M495.4 628.5h0M501.9 630.4h0M508.7 632.4h0M515.4 634.1h0M522.0 635.0h0M528.8 636.2h0M535.9 637.7h0M542.4 638.6h0M549.8 639.7h0M556.4 640.2h0M563.5 640.8h0M570.5 641.0h0M577.4 641.5h0M584.1 642.3h0M591.5 642.6h0M598.5 642.7h0M605.3 642.1h0M612.2 641.5h0M619.1 640.3h0M626.0 639.7h0M632.9 640.1h0M639.5 638.9h0M646.6 638.1h0M653.5 637.1h0M659.9 635.5h0M666.9 634.0h0M673.5 632.4h0M680.2 631.3h0M687.0 630.1h0M693.8 628.9h0M700.5 627.2h0M707.2 625.4h0M713.9 623.8h0M720.2 622.1h0M726.9 619.5h0M733.6 617.3h0M663.4 618.8h0M656.4 622.5h0M649.2 625.8h0M641.5 628.3h0M633.7 631.2h0M626.2 634.4h0M618.9 637.5h0M611.2 640.5h0M603.4 643.5h0M596.0 646.8h0M588.7 650.2h0M581.0 653.8h0M704.7 642.7h0M697.0 646.7h0M689.8 650.0h0M681.7 653.4h0M867.9 652.1h0M872.9 644.8h0M877.3 638.1h0M881.5 630.8h0M885.9 624.3h0M889.4 616.9h0M428.6 617.4h0M431.5 625.6h0M432.2 634.3h0M430.7 643.1h0M429.9 652.0h0M462.1 617.2h0M466.7 622.8h0M471.7 628.5h0M473.6 635.6h0M475.1 643.0h0M476.0 650.1h0M463.0 621.2h0M464.8 628.1h0M466.5 634.7h0M468.7 641.3h0M469.2 648.2h0M492.6 619.0h0M494.3 626.1h0M496.7 633.7h0M499.2 640.8h0M503.0 647.2h0M506.6 654.1h0M551.5 618.0h0M557.4 620.8h0M563.6 623.6h0M570.1 625.9h0M576.3 627.9h0M583.2 629.8h0M589.8 631.2h0M524.1 655.2h0M361.1 619.1h0M369.6 619.9h0M377.9 618.8h0M386.4 620.6h0M395.1 620.5h0M403.0 617.2h0M586.5 631.2h0M593.5 629.3h0M600.0 627.2h0M606.4 625.5h0M613.1 623.3h0M619.0 620.8h0M625.7 618.6h0M604.1 641.6h0M610.9 641.2h0M618.0 641.3h0M624.7 641.2h0M631.8 641.3h0M638.7 641.8h0M645.8 642.0h0M652.9 642.0h0M659.6 642.5h0M666.9 642.4h0M673.8 641.9h0M680.7 641.4h0M687.2 640.4h0M694.1 639.7h0M701.1 638.2h0M708.0 636.7h0M714.9 635.6h0M721.6 633.9h0M728.0 631.6h0M734.8 629.8h0M741.1 627.3h0M747.4 625.3h0M754.0 623.0h0M760.4 620.4h0M767.0 618.5h0M603.9 646.7h0M611.0 647.7h0M617.8 649.2h0M624.7 650.4h0M631.4 651.2h0M638.8 651.6h0M645.9 651.8h0M652.6 652.4h0M659.9 652.1h0M667.1 651.9h0M673.5 651.1h0M680.5 650.6h0M687.6 649.1h0M694.5 647.4h0M701.5 646.2h0M708.1 644.3h0M714.8 642.7h0M721.5 641.1h0M728.5 638.9h0M735.0 636.4h0M741.2 634.5h0M747.9 632.6h0M755.0 630.8h0M761.4 628.0h0M767.2 625.0h0M773.3 621.9h0M779.5 618.8h0M904.4 650.1h0M896.4 654.7h0M394.5 617.3h0M396.1 624.7h0M396.8 632.0h0M398.1 639.1h0M399.4 646.9h0M401.0 654.4h0M478.3 616.7h0M481.6 621.5h0M485.3 626.8h0M489.3 631.7h0M493.0 636.1h0M497.3 640.9h0M501.6 645.7h0M506.2 650.4h0M510.2 655.5h0M419.9 646.7h0M427.8 653.1h0M401.0 621.3h0M402.6 628.6h0M403.6 635.8h0M404.9 643.2h0M405.1 650.8h0" stroke="#ffffff" stroke-width="2.25" stroke-linecap="square" fill="none"/><path d="M399.5 662.9h0M401.3 669.5h0M403.3 676.5h0M405.3 683.2h0M407.5 690.1h0M573.7 657.5h0M565.7 660.4h0M558.1 663.5h0M549.8 665.8h0M541.9 668.0h0M533.4 670.1h0M525.4 672.8h0M517.0 674.8h0M674.3 656.4h0M666.2 658.5h0M658.3 661.4h0M650.5 664.7h0M643.0 668.1h0M635.1 670.9h0M627.2 673.6h0M619.2 676.7h0M611.1 679.3h0M603.0 681.7h0M594.8 684.7h0M586.2 686.9h0M577.8 688.9h0M569.5 690.7h0M561.0 692.8h0M552.8 694.2h0M817.9 696.0h0M825.5 692.5h0M832.8 688.2h0M840.3 683.4h0M846.6 678.1h0M852.6 672.2h0M858.0 665.2h0M863.0 658.7h0M429.1 661.0h0M429.1 669.9h0M428.2 678.8h0M427.2 688.3h0M477.2 657.7h0M478.1 665.8h0M479.3 673.4h0M480.9 681.1h0M482.3 688.9h0M509.5 661.1h0M512.4 668.3h0M515.5 675.1h0M518.8 682.4h0M523.4 688.9h0M528.5 694.8h0M461.5 670.3h0M453.9 675.9h0M446.3 681.0h0M437.5 683.8h0M429.0 687.2h0M420.1 689.9h0M412.3 694.8h0M515.9 659.3h0M507.5 662.1h0M498.7 664.9h0M360.9 683.1h0M367.2 687.9h0M373.6 692.1h0M380.8 695.7h0M888.9 659.1h0M880.7 663.3h0M873.2 668.0h0M865.4 671.9h0M857.2 677.0h0M849.3 681.6h0M841.4 686.0h0M835.1 692.5h0M402.1 662.1h0M403.5 669.4h0M405.2 676.9h0M406.7 684.5h0M408.7 692.3h0M361.0 686.9h0M369.8 693.1h0M435.0 659.9h0M443.0 666.8h0M450.9 673.1h0M459.8 679.1h0M468.4 684.8h0M477.4 690.7h0M405.9 658.7h0M405.9 666.6h0" stroke="#ffffff" stroke-width="2.38" stroke-linecap="square" fill="none"/><path d="M409.8 697.1h0M412.6 703.9h0M415.5 710.9h0M418.2 717.6h0M421.5 724.4h0M423.9 731.5h0M544.6 696.4h0M535.8 698.7h0M527.4 700.3h0M518.9 701.1h0M509.9 701.9h0M501.1 703.2h0M492.8 704.2h0M484.3 705.3h0M475.3 706.4h0M466.5 707.5h0M458.0 708.0h0M449.1 708.5h0M440.3 709.3h0M431.7 710.1h0M422.9 709.6h0M413.9 709.2h0M416.0 713.1h0M424.8 715.1h0M433.3 717.7h0M441.6 720.3h0M449.8 722.5h0M458.7 725.2h0M467.2 727.5h0M476.1 729.3h0M484.3 731.7h0M493.4 733.4h0M502.0 734.7h0M681.8 734.8h0M690.9 733.2h0M699.7 731.5h0M708.5 729.9h0M717.0 728.3h0M725.9 726.2h0M734.2 724.3h0M742.9 721.9h0M751.4 719.0h0M760.1 716.7h0M768.4 714.1h0M776.7 711.9h0M785.3 709.0h0M793.4 706.1h0M801.7 702.6h0M809.7 699.6h0M427.0 697.1h0M426.5 706.9h0M425.3 716.1h0M425.1 725.6h0M425.0 735.0h0M483.9 696.7h0M484.6 704.7h0M486.2 712.4h0M488.5 720.1h0M489.1 728.4h0M534.7 699.8h0M540.7 705.3h0M547.2 709.7h0M554.3 713.8h0M560.7 718.8h0M567.0 723.6h0M574.3 728.5h0M581.0 732.6h0M408.4 703.2h0M388.1 699.0h0M393.1 705.2h0M370.8 703.9h0M372.3 711.8h0M380.5 711.6h0M828.9 699.7h0M822.1 706.4h0M815.3 712.7h0M807.9 719.0h0M800.7 725.2h0M794.2 731.6h0M410.3 700.0h0M412.7 708.0h0M379.1 698.5h0M388.4 703.1h0M398.6 706.7h0M408.6 711.1h0M418.8 715.0h0M428.8 719.4h0M439.0 723.5h0M448.6 727.9h0M458.8 731.7h0M486.3 696.5h0M495.1 702.4h0M503.6 708.3h0M512.7 714.3h0M522.3 720.2h0M531.4 725.8h0M540.7 731.7h0" stroke="#ffffff" stroke-width="2.50" stroke-linecap="square" fill="none"/><path d="M426.3 739.0h0M427.4 746.7h0M510.8 736.1h0M520.1 737.3h0M528.9 738.4h0M537.7 739.2h0M547.1 739.9h0M556.0 740.4h0M565.1 741.0h0M574.0 740.9h0M583.0 740.7h0M592.3 741.5h0M601.0 742.4h0M609.8 742.2h0M618.9 741.6h0M627.7 740.7h0M637.3 740.5h0M646.2 739.7h0M654.8 738.7h0M663.8 737.4h0M672.7 736.1h0M424.0 744.9h0M423.4 754.6h0M423.5 764.6h0M491.1 736.2h0M494.1 744.4h0M496.7 751.8h0M498.5 760.4h0M588.0 736.8h0M595.3 741.8h0M602.1 745.7h0M609.8 749.8h0M616.4 754.5h0M623.7 758.7h0M631.6 762.6h0M638.6 766.6h0M646.8 770.4h0M653.9 774.4h0M496.5 751.7h0M508.5 753.7h0M520.4 758.2h0M526.1 769.2h0M567.6 750.9h0M575.5 760.8h0M583.6 771.1h0M786.7 738.3h0M779.5 745.0h0M772.6 751.2h0M765.4 757.7h0M757.6 764.1h0M749.6 770.2h0M742.2 776.8h0M469.1 735.8h0M479.7 739.7h0M490.0 743.3h0M500.6 747.5h0M510.8 751.6h0M521.7 755.6h0M532.3 759.0h0M542.6 763.1h0M553.2 767.1h0M564.3 770.5h0M550.1 737.0h0M560.3 741.8h0M570.5 746.8h0M580.1 751.4h0M590.1 756.5h0M600.6 761.9h0M610.9 766.9h0" stroke="#ffffff" stroke-width="2.62" stroke-linecap="square" fill="none"/><g transform="translate(597 405) scale(0.06803)">
<path d="M560 240L640 200 740 150 745 168 680 212 700 300 600 310z" fill="#b4bbc6"/>
<path d="M240 450L400 385 412 402 262 482z" fill="#b5bcc4"/>
<path d="M380 470L600 320 690 330 725 400 700 475 520 575 400 565 350 520z" fill="#8d92a6"/>
<path d="M430 425L600 322 655 400 500 492z" fill="#777c90"/>
<path d="M200 505L300 452 400 410 385 560 310 700 250 722 228 650z" fill="#a6abc1"/>
<path d="M740 350L1000 335 1036 350 1020 382 880 402 765 445z" fill="#c6ccd2"/>
<path d="M880 402L965 390 855 482 810 500z" fill="#a2a8be"/>
<path d="M400 592L690 575 702 602 565 652 430 682z" fill="#c3c9d0"/>
<path d="M605 640L560 652 485 722 520 734z" fill="#a2a8be"/>
<ellipse cx="520" cy="290" rx="42" ry="26" fill="#fff"/>
<ellipse cx="680" cy="400" rx="30" ry="36" fill="#f4f4f8"/>
<circle cx="325" cy="500" r="25" fill="#1515a5"/>
<ellipse cx="187" cy="522" rx="16" ry="16" fill="#0c0c0c"/>
<ellipse cx="272" cy="730" rx="30" ry="13" fill="#0c0c0c"/>
<ellipse cx="492" cy="746" rx="24" ry="12" fill="#0c0c0c"/>
<ellipse cx="822" cy="508" rx="24" ry="13" fill="#0c0c0c"/>
<ellipse cx="236" cy="645" rx="10" ry="16" fill="#0c0c0c"/>
</g></svg></div>
<svg class="a" style="left:350px;top:433px" width="6" height="10"><path d="M5 0v8l-4.300-4z" fill="#484848"/></svg>
<svg class="a" style="left:910px;top:433px" width="6" height="10"><path d="M0 0v8l4.300-4z" fill="#484848"/></svg>
<svg class="a" style="left:342px;top:430px" width="2" height="18"><rect x="0" y="0" width="1" height="1" fill="#b0b0b0"/><rect x="0" y="3" width="1" height="1" fill="#b0b0b0"/><rect x="0" y="6" width="1" height="1" fill="#b0b0b0"/><rect x="0" y="9" width="1" height="1" fill="#b0b0b0"/><rect x="0" y="12" width="1" height="1" fill="#b0b0b0"/><rect x="0" y="15" width="1" height="1" fill="#b0b0b0"/></svg>
<svg class="a" style="left:923px;top:430px" width="2" height="18"><rect x="0" y="0" width="1" height="1" fill="#b0b0b0"/><rect x="0" y="3" width="1" height="1" fill="#b0b0b0"/><rect x="0" y="6" width="1" height="1" fill="#b0b0b0"/><rect x="0" y="9" width="1" height="1" fill="#b0b0b0"/><rect x="0" y="12" width="1" height="1" fill="#b0b0b0"/><rect x="0" y="15" width="1" height="1" fill="#b0b0b0"/></svg>
<svg class="a" style="left:621px;top:783px" width="18" height="2"><rect x="0" y="0" width="1" height="1.500" fill="#b0b0b0"/><rect x="3" y="0" width="1" height="1.500" fill="#b0b0b0"/><rect x="6" y="0" width="1" height="1.500" fill="#b0b0b0"/><rect x="9" y="0" width="1" height="1.500" fill="#b0b0b0"/><rect x="12" y="0" width="1" height="1.500" fill="#b0b0b0"/><rect x="15" y="0" width="1" height="1.500" fill="#b0b0b0"/></svg>
<div class="dt" style="left:926px;top:93px;width:271px;height:22px"></div>
<svg class="a" style="left:929px;top:97px" width="19" height="17" viewBox="0 0 19 17"><path d="M11 2.800l5.800-2.200v2.600" fill="#d0d0d0" stroke="#666" stroke-width="1"/><rect x="1.500" y="2.800" width="15.800" height="12" rx="1.600" fill="#bdbdbd" stroke="#484848" stroke-width="1"/><rect x="2.200" y="3.500" width="14.400" height="4" fill="#dcdcdc"/><rect x="8.200" y="5.200" width="8" height="7.600" fill="#f2f2f2" stroke="#8a8a8a" stroke-width=".6"/><rect x="9.800" y="6.700" width="4.900" height="4.600" fill="#2b4fa2"/><circle cx="4.400" cy="5.800" r="1.700" fill="#fff" stroke="#1e1e1e" stroke-width="1"/><circle cx="4.900" cy="6.200" r=".7" fill="#111"/><circle cx="4.600" cy="10.800" r="1.100" fill="#e8e8e8" stroke="#555" stroke-width=".7"/></svg>
<div class="t" style="left:952px;top:95px;letter-spacing:-0.46px;">Camera</div>
<div class="dbtn" style="left:1153px;top:95px"></div><svg class="a" style="left:1153px;top:95px" width="17" height="17"><rect x="3.500" y="3.500" width="10" height="10" fill="#f3dede" stroke="#9c9c9c"/><rect x="3" y="3" width="11" height="3" fill="#6d6d6d"/><rect x="11" y="4" width="2" height="1" fill="#e0b040"/><rect x="5" y="8" width="2" height="2" fill="#d66"/><rect x="10" y="8" width="2" height="2" fill="#d66"/><rect x="5" y="11" width="7" height="1" fill="#e99"/></svg>
<div class="dbtn" style="left:1177px;top:95px"></div><svg class="a" style="left:1177px;top:95px" width="17" height="17"><circle cx="8.500" cy="8.500" r="5.200" fill="#d0112b"/><path d="M6.700 6.700l3.600 3.600M10.300 6.700l-3.600 3.600" stroke="#fff" stroke-width="1.300"/></svg>
<div class="a" style="left:926px;top:115px;width:271px;height:637px;background:#000"></div>
<div class="a" style="left:926px;top:332px;width:271px;height:105px;background:linear-gradient(90deg,rgba(255,255,255,.13),rgba(255,255,255,0) 62%,rgba(255,255,255,.04)),linear-gradient(#7684c2,#8996cc 30%,#9fabd6 60%,#b0bcdc 86%,#b8c3dc)"></div>
<div class="a" style="left:926px;top:437px;width:271px;height:98px;background:#9b9b9b"></div>
<div class="a" style="left:926px;top:752px;width:78px;height:28px;background:#f4f4f4;border:1px solid #bcbcbc;border-top:none;border-radius:0 0 3px 3px;"></div>
<div class="t" style="left:938px;top:757px;letter-spacing:-0.227px;">Camera</div>
<div class="a" style="left:1004px;top:752px;width:64px;height:26px;background:#dcdcdc;border:1px solid #c2c2c2;border-top:none;border-left:none;border-radius:0 0 3px 3px;"></div>
<div class="t" style="left:1015.5px;top:756px;letter-spacing:-0.05px;">Views</div>
<div class="dt" style="left:0;top:787px;width:1197px;height:22px"></div>
<svg class="a" style="left:0px;top:790px" width="18" height="17"><circle cx="8.900" cy="8.300" r="6.700" fill="#f6f6f6" stroke="#2a2a2a" stroke-width="1.500"/><path d="M8.900 4.300v4.300h3.800" fill="none" stroke="#2a2a2a" stroke-width="1.500"/></svg>
<div class="t" style="left:23.5px;top:789px;letter-spacing:-0.07px;">Time</div>
<div class="dbtn" style="left:1177px;top:789px"></div><svg class="a" style="left:1177px;top:789px" width="17" height="17"><circle cx="8.500" cy="8.500" r="5.200" fill="#d0112b"/><path d="M6.700 6.700l3.600 3.600M10.300 6.700l-3.600 3.600" stroke="#fff" stroke-width="1.300"/></svg>
<div class="btn" style="left:8px;top:816px;width:80px;height:25px"></div>
<svg class="a" style="left:19px;top:821px" width="16" height="16"><rect x="1.500" y=".5" width="5" height="14" fill="#d8d8d8" stroke="#8a8a8a"/><rect x="8.500" y=".5" width="5" height="14" fill="#d8d8d8" stroke="#8a8a8a"/></svg>
<div class="t" style="left:36px;top:819px;letter-spacing:-0.709px;">Pause</div>
<div class="t" style="left:104px;top:820px;letter-spacing:0.068px;">Synchronization:</div>
<div class="field" style="left:223px;top:816px;width:119px;background:linear-gradient(#fcfcfc,#efefef)">Off</div>
<svg class="a" style="left:326px;top:826px" width="8" height="5"><path d="M0 0h8l-4 4.500z" fill="#555"/></svg>
<div class="t" style="left:359px;top:820px;letter-spacing:-0.54px;">ROS Time:</div>
<div class="field" style="left:435px;top:816px;width:116px">79.33</div>
<div class="t" style="left:557px;top:820px;letter-spacing:-0.546px;">ROS Elapsed:</div>
<div class="field" style="left:653px;top:816px;width:116px">79.30</div>
<div class="t" style="left:775px;top:820px;letter-spacing:0.055px;">Wall Time:</div>
<div class="field" style="left:852px;top:816px;width:116px">1740136407.66</div>
<div class="t" style="left:975px;top:820px;letter-spacing:-0.166px;">Wall Elapsed:</div>
<div class="field" style="left:1070px;top:816px;width:116px">197.54</div>
<div class="btn" style="left:-2px;top:852px;width:54px;height:24px;line-height:23px">Reset</div>
<div class="t" style="left:58.5px;top:854px;letter-spacing:0.044px;"><b>Left-Click:</b> Rotate. <b>Middle-Click:</b> Move X/Y. <b>Right-Click/Mouse Wheel:</b>: Zoom. <b>Shift</b>: More options.</div>
<div class="t" style="left:1140px;top:852px;letter-spacing:0.094px;">8 fps</div>
<div class="a" style="left:0;top:877px;width:1199px;height:1px;background:#d2d2d2"></div>
<div class="a" style="left:0;top:878px;width:1199px;height:4px;background:#5a5a5a"></div>
<div class="a" style="left:142px;top:878px;width:11px;height:4px;background:#2a2a2a"></div>
<div class="a" style="left:1197px;top:0;width:2px;height:882px;background:linear-gradient(#4a4a4e 0,#4a4a4e 32px,#8c8c8e 32px,#8c8c8e 100px,#7a7a7a 100px)"></div>
</body></html>
